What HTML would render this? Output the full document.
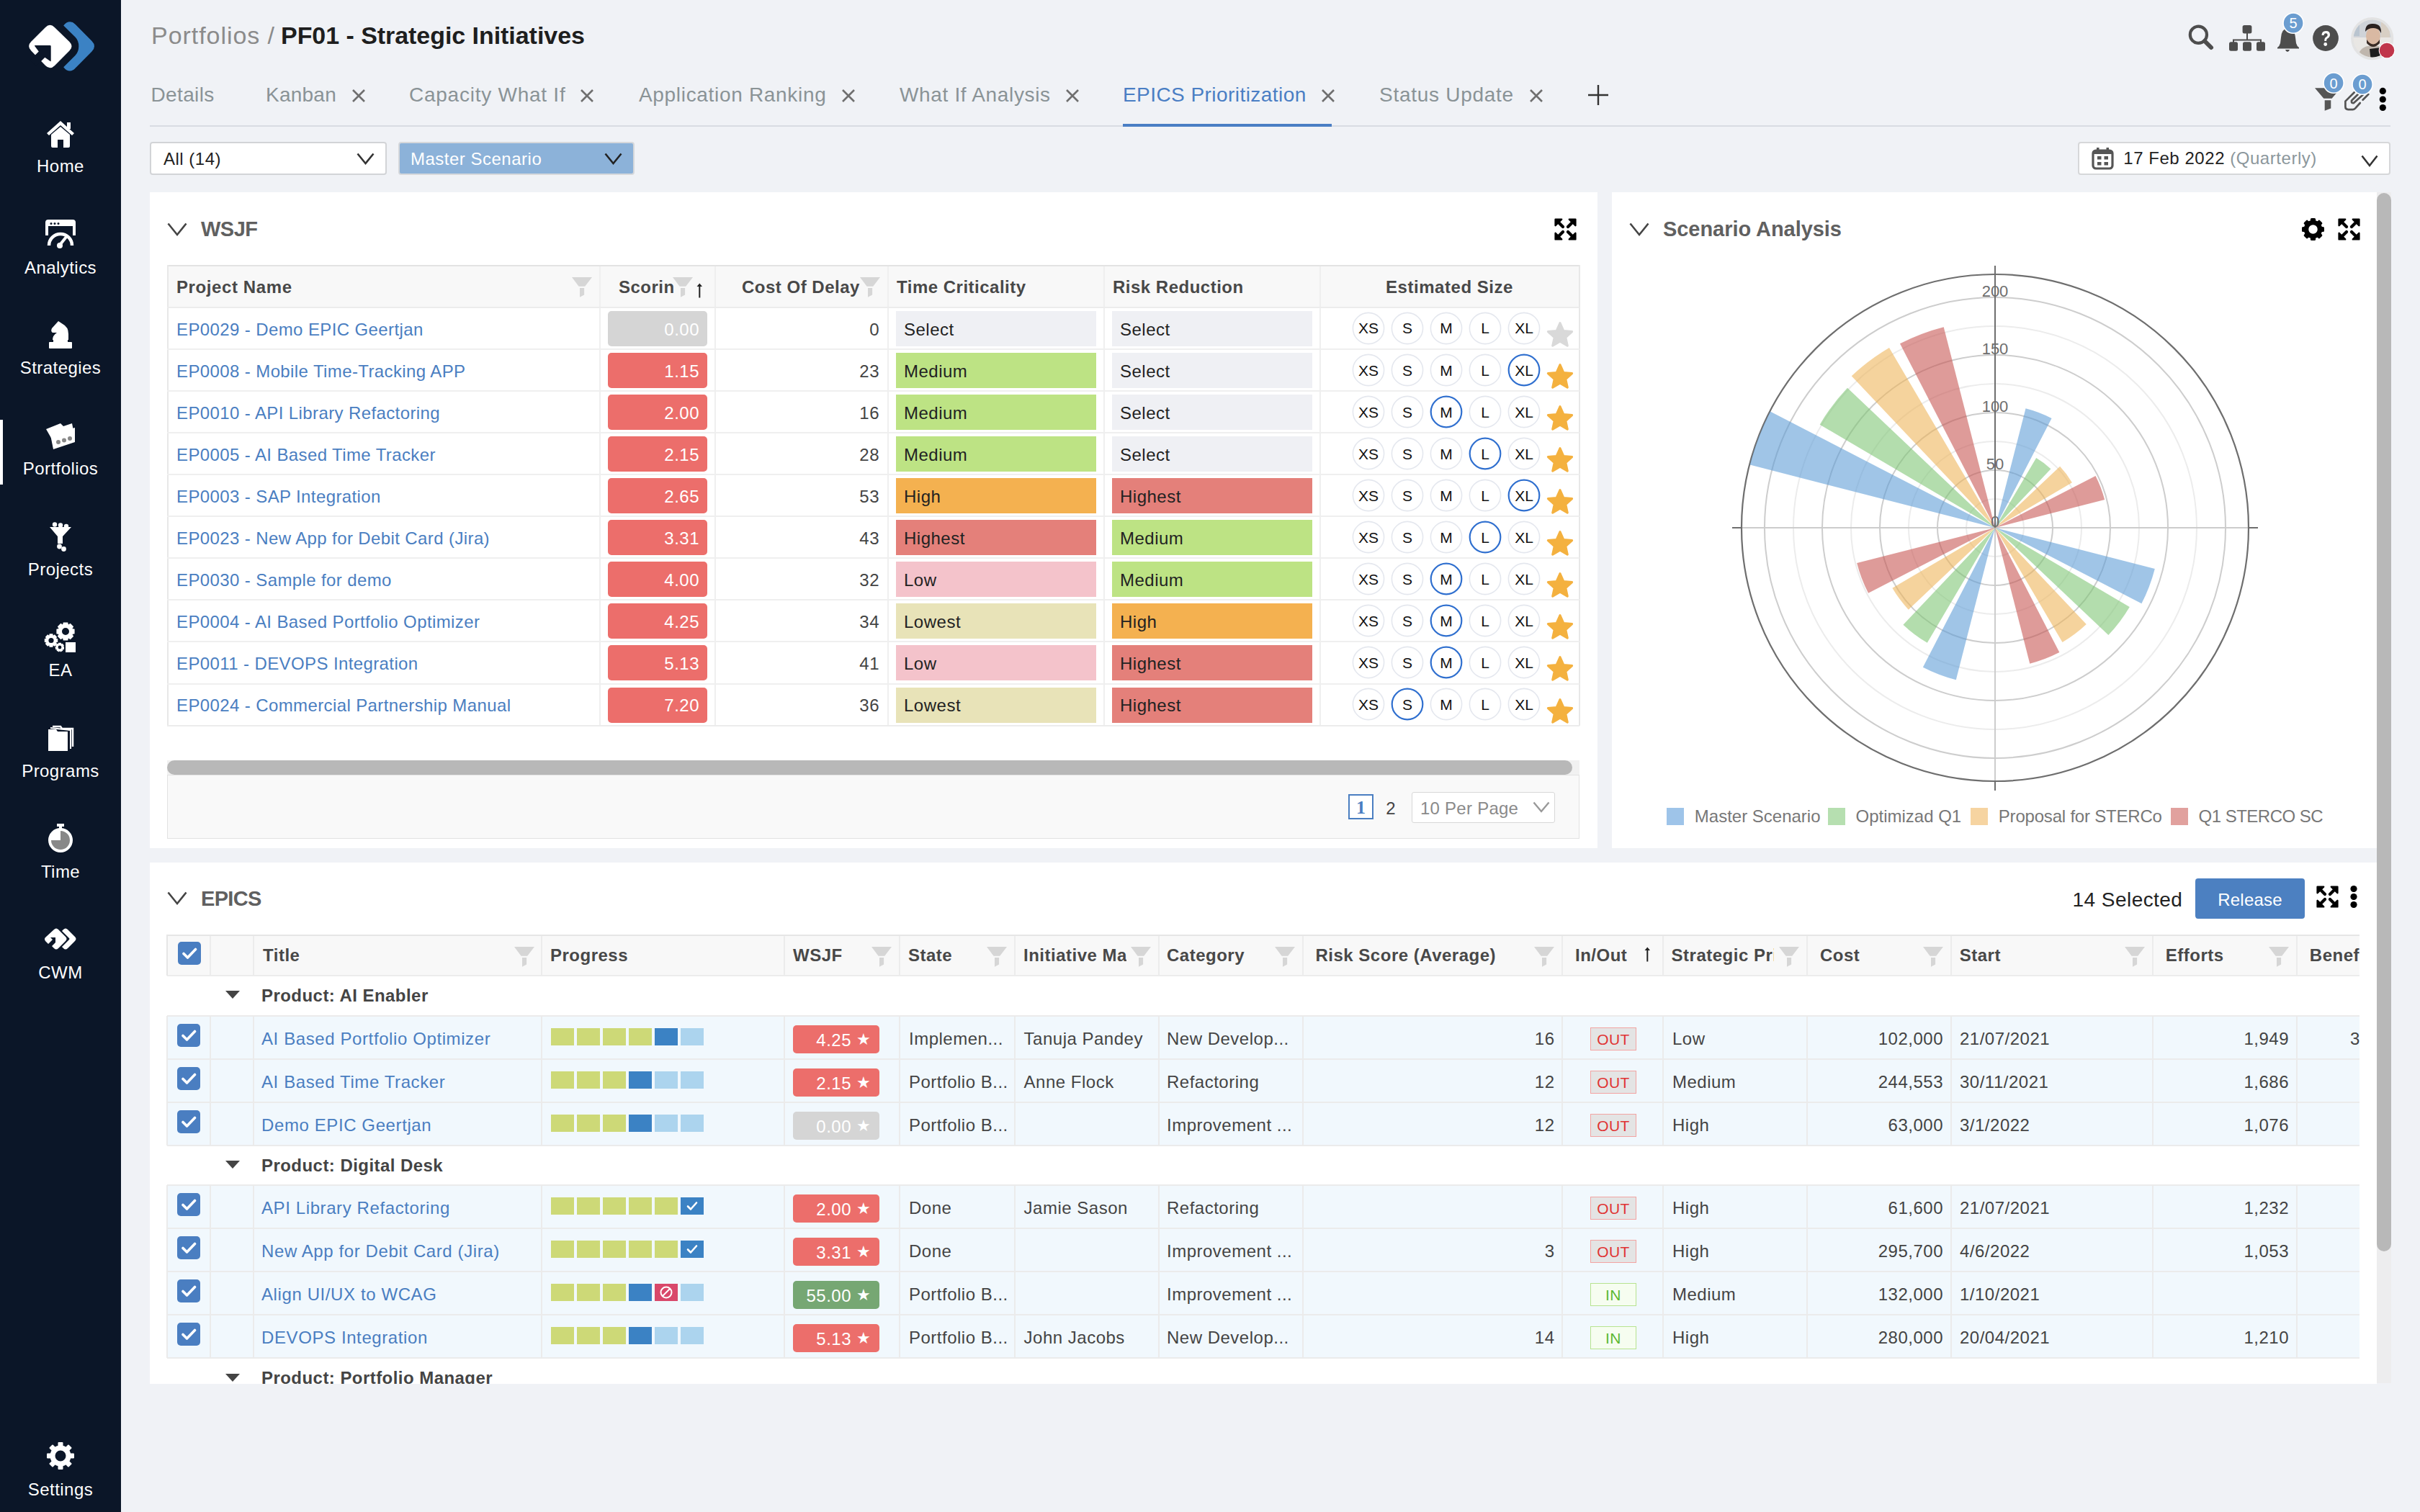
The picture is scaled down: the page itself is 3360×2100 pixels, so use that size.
<!DOCTYPE html><html><head><meta charset="utf-8"><title>EPICS Prioritization</title><style>
html,body{margin:0;padding:0;width:3360px;height:2100px;overflow:hidden;background:#f0f2f6;font-family:"Liberation Sans", sans-serif;}
.a{position:absolute;}
.t{position:absolute;white-space:nowrap;}
svg.a{overflow:visible}
</style></head><body>

<div class="a" style="left:0px;top:0px;width:168px;height:2100px;background:#0b1628"></div>
<svg class="a" style="left:0px;top:0px" width="168" height="120" viewBox="0 0 168 120">
<path d="M 43.25 57.83 L 63.05 37.97 Q 69.4 31.6 75.8 37.9 L 96.4 57.9 Q 102.8 64.2 96.4 70.5 L 75.8 91.2 Q 69.4 97.5 63.0 91.1 L 43.3 70.6 Q 36.9 64.2 43.25 57.83 Z" fill="#fff"/>
<path d="M 48.5 63.1 L 69.5 63.1 Q 70.7 63.1 70.7 64.3 L 70.7 84.5 Q 70.7 85.6 69.8 85 L 62.3 79.8 L 50.1 91.9 L 41.9 83.5 L 53.8 71.6 L 48.2 64 Q 47.9 63.1 48.5 63.1 Z" fill="#0b1628"/>
<path d="M 88.2 35.6 Q 92 30.3 97.2 30.3 Q 101 30.3 104.5 33.7 L 127.5 57 Q 131 60.5 131 64.2 Q 131 68 127.5 71.5 L 104.5 94.7 Q 101 98.5 97.2 98.5 Q 92 98.5 88.2 93.3 L 104.5 77 Q 109.3 72 109.3 64.2 Q 109.3 56.5 104.5 51.5 Z" fill="#3b82c4"/>
</svg>
<svg class="a" style="left:63px;top:165px" width="42" height="40" viewBox="0 0 42 40"><path d="M21 3 L40 20 L37 23 L21 9 L5 23 L2 20 Z" fill="#fff"/><rect x="30" y="5" width="5" height="9" fill="#fff"/><path d="M8 22 L21 11 L34 22 L34 38 Q34 40 32 40 L25 40 L25 29 L17 29 L17 40 L10 40 Q8 40 8 38 Z" fill="#fff"/></svg>
<div class="t" style="top:216.0px;font-size:24px;line-height:29px;color:#fff;font-weight:400;letter-spacing:0.45px;left:-516px;width:1200px;text-align:center;">Home</div>
<svg class="a" style="left:63px;top:305px" width="42" height="40" viewBox="0 0 42 40"><rect x="2" y="2" width="38" height="22" rx="2" fill="none" stroke="#fff" stroke-width="4"/><rect x="2" y="2" width="38" height="7" fill="#fff"/><circle cx="8" cy="5.5" r="1.5" fill="#0b1628"/><circle cx="13" cy="5.5" r="1.5" fill="#0b1628"/><circle cx="18" cy="5.5" r="1.5" fill="#0b1628"/><rect x="0" y="22" width="42" height="18" fill="#0b1628"/><path d="M5 36 A16 16 0 0 1 37 36" fill="none" stroke="#fff" stroke-width="4.5"/><path d="M21 34 L29 24" stroke="#fff" stroke-width="4" stroke-linecap="round"/><circle cx="20" cy="36" r="4" fill="#fff"/></svg>
<div class="t" style="top:356.5px;font-size:24px;line-height:29px;color:#fff;font-weight:400;letter-spacing:0.45px;left:-516px;width:1200px;text-align:center;">Analytics</div>
<svg class="a" style="left:65px;top:444px" width="38" height="41" viewBox="0 0 38 41"><path d="M16 2 L22 6 Q30 10 30 20 L30 28 L8 28 Q8 22 14 18 L8 18 Q5 16 7 12 Z" fill="#fff"/><rect x="3" y="31" width="32" height="9" rx="1" fill="#fff"/><rect x="9" y="28" width="20" height="4" fill="#fff"/></svg>
<div class="t" style="top:495.5px;font-size:24px;line-height:29px;color:#fff;font-weight:400;letter-spacing:0.45px;left:-516px;width:1200px;text-align:center;">Strategies</div>
<div class="a" style="left:0px;top:583px;width:4px;height:90px;background:#fff"></div>
<svg class="a" style="left:62px;top:584px" width="44" height="42" viewBox="0 0 44 42"><path d="M2 12 L22 4 L26 8 L38 4 L40 14 L10 26 Z" fill="#fff"/><path d="M8 20 L42 10 L42 30 L12 40 Z" fill="#fff"/><circle cx="19" cy="30" r="3" fill="#888"/><circle cx="27" cy="27.5" r="3" fill="#888"/><circle cx="35" cy="25" r="3" fill="#888"/></svg>
<div class="t" style="top:636.0px;font-size:24px;line-height:29px;color:#fff;font-weight:400;letter-spacing:0.45px;left:-516px;width:1200px;text-align:center;">Portfolios</div>
<svg class="a" style="left:66px;top:722px" width="36" height="46" viewBox="0 0 36 46"><path d="M3 10 L33 10 L21 23 L21 33 L14 33 L14 23 Z" fill="#fff"/><circle cx="10" cy="6.5" r="3.2" fill="#fff"/><circle cx="18" cy="7.5" r="3.2" fill="#fff"/><circle cx="26" cy="9" r="3.2" fill="#fff"/><circle cx="16.5" cy="37" r="3.4" fill="#fff"/><circle cx="22.5" cy="40.5" r="3.4" fill="#fff"/></svg>
<div class="t" style="top:776.0px;font-size:24px;line-height:29px;color:#fff;font-weight:400;letter-spacing:0.45px;left:-516px;width:1200px;text-align:center;">Projects</div>
<svg class="a" style="left:60px;top:860px" width="48" height="50" viewBox="0 0 48 50"><path fill-rule="evenodd" fill="#fff" d="M26.99 7.84 L27.82 4.40 L34.18 4.40 L35.01 7.84 L34.64 7.69 L37.66 5.84 L42.16 10.34 L40.31 13.36 L40.16 12.99 L43.60 13.82 L43.60 20.18 L40.16 21.01 L40.31 20.64 L42.16 23.66 L37.66 28.16 L34.64 26.31 L35.01 26.16 L34.18 29.60 L27.82 29.60 L26.99 26.16 L27.36 26.31 L24.34 28.16 L19.84 23.66 L21.69 20.64 L21.84 21.01 L18.40 20.18 L18.40 13.82 L21.84 12.99 L21.69 13.36 L19.84 10.34 L24.34 5.84 L27.36 7.69 Z M36.00 17.00 A5 5 0 1 0 26.00 17.00 A5 5 0 1 0 36.00 17.00 ZM8.11 22.90 L8.67 20.29 L13.33 20.29 L13.89 22.90 L13.62 22.80 L15.87 21.34 L19.16 24.63 L17.70 26.88 L17.60 26.61 L20.21 27.17 L20.21 31.83 L17.60 32.39 L17.70 32.12 L19.16 34.37 L15.87 37.66 L13.62 36.20 L13.89 36.10 L13.33 38.71 L8.67 38.71 L8.11 36.10 L8.38 36.20 L6.13 37.66 L2.84 34.37 L4.30 32.12 L4.40 32.39 L1.79 31.83 L1.79 27.17 L4.40 26.61 L4.30 26.88 L2.84 24.63 L6.13 21.34 L8.38 22.80 Z M14.60 29.50 A3.6 3.6 0 1 0 7.40 29.50 A3.6 3.6 0 1 0 14.60 29.50 ZM20.73 34.54 L21.19 32.76 L24.81 32.76 L25.27 34.54 L25.07 34.45 L26.75 33.69 L29.01 36.53 L27.90 38.00 L27.85 37.78 L29.49 38.62 L28.68 42.16 L26.84 42.20 L26.98 42.03 L27.34 43.84 L24.07 45.41 L22.89 44.00 L23.11 44.00 L21.93 45.41 L18.66 43.84 L19.02 42.03 L19.16 42.20 L17.32 42.16 L16.51 38.62 L18.15 37.78 L18.10 38.00 L16.99 36.53 L19.25 33.69 L20.93 34.45 Z M25.40 39.00 A2.4 2.4 0 1 0 20.60 39.00 A2.4 2.4 0 1 0 25.40 39.00 Z"/><rect x="31" y="32" width="14" height="14" fill="#fff"/><rect x="29" y="30" width="2" height="18" fill="#0b1628"/><rect x="29" y="30" width="18" height="2" fill="#0b1628"/></svg>
<div class="t" style="top:916.0px;font-size:24px;line-height:29px;color:#fff;font-weight:400;letter-spacing:0.45px;left:-516px;width:1200px;text-align:center;">EA</div>
<svg class="a" style="left:64px;top:1005px" width="40" height="40" viewBox="0 0 40 40"><path d="M3 8 L14 8 L16 11 L30 11 L30 38 L3 38 Z" fill="#fff"/><path d="M9 4 L20 4 L22 7 L37 7 L37 32" fill="none" stroke="#fff" stroke-width="2.5"/><path d="M6 6 L34 9 L34 35" fill="none" stroke="#fff" stroke-width="2"/></svg>
<div class="t" style="top:1056.0px;font-size:24px;line-height:29px;color:#fff;font-weight:400;letter-spacing:0.45px;left:-516px;width:1200px;text-align:center;">Programs</div>
<svg class="a" style="left:66px;top:1143px" width="36" height="43" viewBox="0 0 36 43"><rect x="13" y="1" width="10" height="4" fill="#fff"/><rect x="16" y="4" width="4" height="5" fill="#fff"/><circle cx="18" cy="24" r="17" fill="#fff"/><path d="M18 24 L18 11 A13 13 0 1 1 5 24 Z" fill="#888"/></svg>
<div class="t" style="top:1195.5px;font-size:24px;line-height:29px;color:#fff;font-weight:400;letter-spacing:0.45px;left:-516px;width:1200px;text-align:center;">Time</div>
<svg class="a" style="left:61px;top:1289px" width="46" height="33" viewBox="0 0 46 33"><path d="M14 2 Q17 -1 20 2 L30 12 Q33 15 30 18 L20 28 Q17 31 14 28 L11 25 L16 20 L16 13 L9 13 L12 16 L6 22 L2 18 Q0 15 2 13 Z" fill="#fff"/><path d="M27 2 Q30 -1 33 2 L43 12 Q46 15 43 18 L33 28 Q30 31 27 28 L25 26 L35 16 Q36 15 35 14 L25 4 Z" fill="#fff"/></svg>
<div class="t" style="top:1335.5px;font-size:24px;line-height:29px;color:#fff;font-weight:400;letter-spacing:0.45px;left:-516px;width:1200px;text-align:center;">CWM</div>
<svg class="a" style="left:64px;top:2002px" width="40" height="40" viewBox="0 0 40 40"><g transform="translate(20,20)"><circle r="11" fill="none" stroke="#fff" stroke-width="7"/><rect x="-3.5" y="-19" width="7" height="8" rx="1" fill="#fff" transform="rotate(0)"/><rect x="-3.5" y="-19" width="7" height="8" rx="1" fill="#fff" transform="rotate(45)"/><rect x="-3.5" y="-19" width="7" height="8" rx="1" fill="#fff" transform="rotate(90)"/><rect x="-3.5" y="-19" width="7" height="8" rx="1" fill="#fff" transform="rotate(135)"/><rect x="-3.5" y="-19" width="7" height="8" rx="1" fill="#fff" transform="rotate(180)"/><rect x="-3.5" y="-19" width="7" height="8" rx="1" fill="#fff" transform="rotate(225)"/><rect x="-3.5" y="-19" width="7" height="8" rx="1" fill="#fff" transform="rotate(270)"/><rect x="-3.5" y="-19" width="7" height="8" rx="1" fill="#fff" transform="rotate(315)"/></g></svg>
<div class="t" style="top:2053.5px;font-size:24px;line-height:29px;color:#fff;font-weight:400;letter-spacing:0.45px;left:-516px;width:1200px;text-align:center;">Settings</div>
<div class="t" style="top:29.1px;font-size:34px;line-height:41px;color:#8b8b8b;font-weight:400;letter-spacing:0.95px;left:210px;">Portfolios /</div>
<div class="t" style="top:29.1px;font-size:34px;line-height:41px;color:#1e1e1e;font-weight:700;letter-spacing:-0.05px;left:390px;">PF01 - Strategic Initiatives</div>
<svg class="a" style="left:3036px;top:32px" width="40" height="42" viewBox="0 0 40 42"><circle cx="16.4" cy="16.3" r="11.6" fill="none" stroke="#4d4d4d" stroke-width="4.2"/><path d="M25 25 L34 34" stroke="#4d4d4d" stroke-width="6" stroke-linecap="round"/></svg>
<svg class="a" style="left:3094px;top:34px" width="52" height="38" viewBox="0 0 52 38"><rect x="19.6" y="1" width="12.8" height="11.4" rx="2.5" fill="#4d4d4d"/><rect x="25" y="12" width="2" height="10" fill="#4d4d4d"/><path d="M7 27 L7 21.6 L45 21.6 L45 27" fill="none" stroke="#4d4d4d" stroke-width="2"/><rect x="1" y="24.3" width="12" height="12.5" rx="2.5" fill="#4d4d4d"/><rect x="20" y="24.3" width="12" height="12.5" rx="2.5" fill="#4d4d4d"/><rect x="39" y="24.3" width="12" height="12.5" rx="2.5" fill="#4d4d4d"/></svg>
<svg class="a" style="left:3160px;top:38px" width="34" height="36" viewBox="0 0 34 36"><path d="M15 2 Q26 2 27 14 L28 22 Q29 26 32 28 L32 29.5 L2 29.5 L2 28 Q5 26 6 22 L7 14 Q8 2 15 2 Z" fill="#4d4d4d"/><path d="M13 31 L19 31 Q18 34 16 34 Q14 34 13 31 Z" fill="#4d4d4d"/></svg>
<svg class="a" style="left:3167.9px;top:15.700000000000003px" width="32.2" height="32.2" viewBox="0 0 32.2 32.2"><circle cx="16.1" cy="16.1" r="14.9" fill="#fff"/><circle cx="16.1" cy="16.1" r="13.299999999999999" fill="#6b9dd0"/></svg><div class="t" style="top:20.3px;font-size:20px;line-height:24px;color:#fff;font-weight:400;letter-spacing:0px;left:2584px;width:1200px;text-align:center;">5</div>
<svg class="a" style="left:3211px;top:35px" width="36" height="36" viewBox="0 0 36 36"><circle cx="18" cy="18" r="17.9" fill="#4d4d4d"/><path d="M12.5 14 Q12.5 8 18.3 8 Q24 8 24 13.3 Q24 16.5 20.5 18.5 Q19 19.4 19 22 L16.3 22 Q16 17.5 19.2 16 Q20.7 15 20.7 13.5 Q20.7 11.2 18.2 11.2 Q15.8 11.2 15.6 14 Z" fill="#fff"/><circle cx="17.7" cy="26.5" r="2.4" fill="#fff"/></svg>
<svg class="a" style="left:3262px;top:22px" width="64" height="64" viewBox="0 0 64 64"><defs><clipPath id="av"><circle cx="31.7" cy="31.6" r="26"/></clipPath></defs>
<circle cx="31.7" cy="31.6" r="29.6" fill="#e3e3e3"/>
<g clip-path="url(#av)"><rect x="0" y="0" width="64" height="64" fill="#e9e7e4"/><rect x="0" y="0" width="64" height="30" fill="#cfd3d8"/><rect x="6" y="6" width="8" height="22" fill="#b9c4cf"/><rect x="44" y="4" width="12" height="26" fill="#d8cfc4"/>
<path d="M10 64 Q12 44 26 42 L40 42 Q54 46 56 64 Z" fill="#bfb6ad"/><path d="M28 46 L44 44 Q50 52 50 64 L30 64 Z" fill="#1d1d1d"/>
<ellipse cx="33" cy="28" rx="10" ry="13" fill="#d9b9a3"/><path d="M22 22 Q22 10 33 11 Q45 11 44 24 Q41 17 33 17 Q26 17 22 22 Z" fill="#2a2220"/><path d="M24 33 Q33 46 42 33 L42 38 Q33 48 24 38 Z" fill="#3a2c26"/></g>
<circle cx="52" cy="48" r="11.3" fill="#fff"/><circle cx="52" cy="48" r="10.3" fill="#c0354a"/></svg>
<div class="a" style="left:208px;top:174px;width:3111px;height:2px;background:#d9dce2"></div>
<div class="t" style="top:114.5px;font-size:28px;line-height:34px;color:#8a9396;font-weight:400;letter-spacing:0.36px;left:209.5px;">Details</div>
<div class="t" style="top:114.5px;font-size:28px;line-height:34px;color:#8a9396;font-weight:400;letter-spacing:0.24px;left:369px;">Kanban</div>
<svg class="a" style="left:487.5px;top:122.5px" width="20" height="20" viewBox="0 0 20 20"><path d="M2 2 L18 18 M18 2 L2 18" stroke="#6f6f6f" stroke-width="2.6"/></svg>
<div class="t" style="top:114.5px;font-size:28px;line-height:34px;color:#8a9396;font-weight:400;letter-spacing:0.75px;left:568px;">Capacity What If</div>
<svg class="a" style="left:805px;top:122.5px" width="20" height="20" viewBox="0 0 20 20"><path d="M2 2 L18 18 M18 2 L2 18" stroke="#6f6f6f" stroke-width="2.6"/></svg>
<div class="t" style="top:114.5px;font-size:28px;line-height:34px;color:#8a9396;font-weight:400;letter-spacing:0.68px;left:887px;">Application Ranking</div>
<svg class="a" style="left:1167.5px;top:122.5px" width="20" height="20" viewBox="0 0 20 20"><path d="M2 2 L18 18 M18 2 L2 18" stroke="#6f6f6f" stroke-width="2.6"/></svg>
<div class="t" style="top:114.5px;font-size:28px;line-height:34px;color:#8a9396;font-weight:400;letter-spacing:0.66px;left:1249px;">What If Analysis</div>
<svg class="a" style="left:1478.5px;top:122.5px" width="20" height="20" viewBox="0 0 20 20"><path d="M2 2 L18 18 M18 2 L2 18" stroke="#6f6f6f" stroke-width="2.6"/></svg>
<div class="t" style="top:114.5px;font-size:28px;line-height:34px;color:#4a7ec4;font-weight:400;letter-spacing:0.44px;left:1559px;">EPICS Prioritization</div>
<svg class="a" style="left:1833.7px;top:122.5px" width="20" height="20" viewBox="0 0 20 20"><path d="M2 2 L18 18 M18 2 L2 18" stroke="#6f6f6f" stroke-width="2.6"/></svg>
<div class="t" style="top:114.5px;font-size:28px;line-height:34px;color:#8a9396;font-weight:400;letter-spacing:0.72px;left:1915px;">Status Update</div>
<svg class="a" style="left:2123px;top:122.5px" width="20" height="20" viewBox="0 0 20 20"><path d="M2 2 L18 18 M18 2 L2 18" stroke="#6f6f6f" stroke-width="2.6"/></svg>
<div class="a" style="left:1559px;top:172px;width:290px;height:4px;background:#4a7ec4"></div>
<svg class="a" style="left:2204px;top:117px" width="30" height="30" viewBox="0 0 30 30"><path d="M15 1 L15 29 M1 15 L29 15" stroke="#333" stroke-width="2.4"/></svg>
<svg class="a" style="left:3213px;top:121px" width="40" height="34" viewBox="0 0 40 34"><path d="M1 1.3 L37 1.3 L24.6 15.8 L13.3 15.8 Z" fill="#555"/><path d="M14.7 18.2 L23.3 18.2 L23.3 29.5 L14.7 32.7 Z" fill="#555"/></svg>
<svg class="a" style="left:3253px;top:122px" width="40" height="34" viewBox="0 0 40 34"><path d="M 15.8 6.2 L 3.4 18.6 L 3.4 26.3 Q 3.4 30.1 7.2 30.1 L 13.6 30.1 Q 15.5 30.1 17 28.6 L 23.8 21 M 27.6 16.7 L 35.4 8.9 M 20.6 9.2 L 12 17.8 L 12 19.6 Q 12 21.2 14.7 21.2 L 27.6 9.7" fill="none" stroke="#555" stroke-width="2.7" stroke-linecap="round" stroke-linejoin="round"/></svg>
<svg class="a" style="left:3223.9px;top:99.0px" width="32.2" height="32.2" viewBox="0 0 32.2 32.2"><circle cx="16.1" cy="16.1" r="14.9" fill="#fff"/><circle cx="16.1" cy="16.1" r="13.299999999999999" fill="#6b9dd0"/></svg><div class="t" style="top:103.6px;font-size:20px;line-height:24px;color:#fff;font-weight:400;letter-spacing:0px;left:2640px;width:1200px;text-align:center;">0</div>
<svg class="a" style="left:3263.9px;top:100.7px" width="32.2" height="32.2" viewBox="0 0 32.2 32.2"><circle cx="16.1" cy="16.1" r="14.9" fill="#fff"/><circle cx="16.1" cy="16.1" r="13.299999999999999" fill="#6b9dd0"/></svg><div class="t" style="top:105.3px;font-size:20px;line-height:24px;color:#fff;font-weight:400;letter-spacing:0px;left:2680px;width:1200px;text-align:center;">0</div>
<svg class="a" style="left:3302px;top:121px" width="12" height="34" viewBox="0 0 12 34"><circle cx="6.3" cy="5.4" r="4.6" fill="#000"/><circle cx="6.3" cy="17" r="4.6" fill="#000"/><circle cx="6.3" cy="28.5" r="4.6" fill="#000"/></svg>
<div class="a" style="left:208px;top:196.5px;width:329px;height:46.5px;background:#fff;border:2px solid #d2d4d7;border-radius:4px;box-sizing:border-box"></div>
<div class="t" style="top:206.0px;font-size:24px;line-height:29px;color:#222;font-weight:400;letter-spacing:0.5px;left:227px;">All (14)</div>
<svg class="a" style="left:495px;top:212px" width="25" height="17" viewBox="0 0 25 17"><path d="M1.5 1.5 L12.5 15 L23.5 1.5" fill="none" stroke="#333" stroke-width="2.6"/></svg>
<div class="a" style="left:553px;top:196.5px;width:328px;height:46.5px;background:#8cb2d9;border:2px solid #d6d8db;border-radius:4px;box-sizing:border-box"></div>
<div class="t" style="top:206.0px;font-size:24px;line-height:29px;color:#fff;font-weight:400;letter-spacing:0.5px;left:570px;">Master Scenario</div>
<svg class="a" style="left:839px;top:212px" width="25" height="17" viewBox="0 0 25 17"><path d="M1.5 1.5 L12.5 15 L23.5 1.5" fill="none" stroke="#222" stroke-width="2.6"/></svg>
<div class="a" style="left:2885px;top:196.5px;width:434px;height:46.5px;background:#fff;border:2px solid #d6d7d9;border-radius:4px;box-sizing:border-box"></div>
<svg class="a" style="left:2904px;top:204px" width="32" height="32" viewBox="0 0 32 32"><rect x="2" y="5" width="27" height="25" rx="4" fill="none" stroke="#555" stroke-width="3.2"/><rect x="7" y="1" width="3.5" height="6" fill="#555"/><rect x="20.5" y="1" width="3.5" height="6" fill="#555"/><rect x="2" y="5" width="27" height="5" fill="#555"/><rect x="8" y="13" width="5.5" height="4.5" fill="#555"/><rect x="17.5" y="13" width="5.5" height="4.5" fill="#555"/><rect x="8" y="21" width="5.5" height="4.5" fill="#555"/><rect x="17.5" y="21" width="5.5" height="4.5" fill="#555"/></svg>
<div class="t" style="top:204.7px;font-size:24px;line-height:29px;color:#222;font-weight:400;letter-spacing:0.54px;left:2948.3px;">17 Feb 2022 <span style="color:#8c979c">(Quarterly)</span></div>
<svg class="a" style="left:3278px;top:215px" width="24" height="17" viewBox="0 0 24 17"><path d="M1.5 1.5 L12.0 15 L22.5 1.5" fill="none" stroke="#333" stroke-width="2.6"/></svg>
<div class="a" style="left:208px;top:267px;width:2010px;height:911px;background:#fff"></div>
<svg class="a" style="left:231.5px;top:308.5px" width="28" height="19" viewBox="0 0 28 19"><path d="M1.5 1.5 L14.0 17 L26.5 1.5" fill="none" stroke="#444" stroke-width="2.6"/></svg>
<div class="t" style="top:300.5px;font-size:29px;line-height:35px;color:#606060;font-weight:700;letter-spacing:-0.5px;left:279px;">WSJF</div>
<svg class="a" style="left:2158px;top:303px" width="31" height="31" viewBox="0 0 31 31"><g fill="#000" stroke="#000" stroke-linejoin="round" stroke-linecap="round"><g transform=""><path d="M1.6 1.6 L10.2 1.6 L1.6 10.2 Z" stroke-width="2.4"/><path d="M5 5 L12 12" stroke-width="4.3" fill="none"/></g><g transform="translate(31,0) scale(-1,1)"><path d="M1.6 1.6 L10.2 1.6 L1.6 10.2 Z" stroke-width="2.4"/><path d="M5 5 L12 12" stroke-width="4.3" fill="none"/></g><g transform="translate(0,31) scale(1,-1)"><path d="M1.6 1.6 L10.2 1.6 L1.6 10.2 Z" stroke-width="2.4"/><path d="M5 5 L12 12" stroke-width="4.3" fill="none"/></g><g transform="translate(31,31) scale(-1,-1)"><path d="M1.6 1.6 L10.2 1.6 L1.6 10.2 Z" stroke-width="2.4"/><path d="M5 5 L12 12" stroke-width="4.3" fill="none"/></g></g></svg>
<div class="a" style="left:232px;top:368px;width:1961px;height:59px;background:#f8f8f8;border-top:2px solid #e3e3e3;box-sizing:border-box"></div>
<div class="a" style="left:832px;top:370px;width:2px;height:637.6px;background:#efefef"></div>
<div class="a" style="left:992px;top:370px;width:2px;height:637.6px;background:#efefef"></div>
<div class="a" style="left:1232px;top:370px;width:2px;height:637.6px;background:#efefef"></div>
<div class="a" style="left:1532px;top:370px;width:2px;height:637.6px;background:#efefef"></div>
<div class="a" style="left:1832px;top:370px;width:2px;height:637.6px;background:#efefef"></div>
<div class="a" style="left:232px;top:368px;width:2px;height:639.6px;background:#e8e8e8"></div>
<div class="a" style="left:2192px;top:368px;width:2px;height:639.6px;background:#e8e8e8"></div>
<div class="a" style="left:232px;top:426px;width:1961px;height:2px;background:#ececec"></div>
<div class="t" style="top:384.0px;font-size:24px;line-height:29px;color:#484848;font-weight:700;letter-spacing:0.6px;left:245px;">Project Name</div>
<svg class="a" style="left:794px;top:385px" width="28" height="29" viewBox="0 0 28 29"><path d="M0 0 L28 0 L18.2 12.7 L9.6 12.7 Z" fill="#d6d6d6"/><path d="M11 15 L17.1 15 L17.1 24.4 L11 27.7 Z" fill="#d6d6d6"/></svg>
<div class="t" style="top:384.0px;font-size:24px;line-height:29px;color:#484848;font-weight:700;letter-spacing:0.5px;left:859px;">Scorin</div>
<svg class="a" style="left:934px;top:385px" width="28" height="29" viewBox="0 0 28 29"><path d="M0 0 L28 0 L18.2 12.7 L9.6 12.7 Z" fill="#d6d6d6"/><path d="M11 15 L17.1 15 L17.1 24.4 L11 27.7 Z" fill="#d6d6d6"/></svg>
<svg class="a" style="left:964px;top:392px" width="14" height="22" viewBox="0 0 14 22"><path d="M7.3 5 L7.3 21.5" stroke="#222" stroke-width="2"/><path d="M3.5 6 L11 6 L7.3 1.5 Z" fill="#222"/></svg>
<div class="t" style="top:384.0px;font-size:24px;line-height:29px;color:#484848;font-weight:700;letter-spacing:0.5px;left:1030px;">Cost Of Delay</div>
<svg class="a" style="left:1194px;top:385px" width="28" height="29" viewBox="0 0 28 29"><path d="M0 0 L28 0 L18.2 12.7 L9.6 12.7 Z" fill="#d6d6d6"/><path d="M11 15 L17.1 15 L17.1 24.4 L11 27.7 Z" fill="#d6d6d6"/></svg>
<div class="t" style="top:384.0px;font-size:24px;line-height:29px;color:#484848;font-weight:700;letter-spacing:0.5px;left:1245px;">Time Criticality</div>
<div class="t" style="top:384.0px;font-size:24px;line-height:29px;color:#484848;font-weight:700;letter-spacing:0.5px;left:1545px;">Risk Reduction</div>
<div class="t" style="top:384.0px;font-size:24px;line-height:29px;color:#484848;font-weight:700;letter-spacing:0.54px;left:1412.5px;width:1200px;text-align:center;">Estimated Size</div>
<div class="t" style="top:442.8px;font-size:24px;line-height:29px;color:#4a7ec1;font-weight:400;letter-spacing:0.39px;left:245px;">EP0029 - Demo EPIC Geertjan</div>
<div class="a" style="left:844px;top:432px;width:138px;height:49px;background:#d5d5d5;border-radius:5px"></div>
<div class="t" style="top:442.8px;font-size:24px;line-height:29px;color:#fff;font-weight:400;letter-spacing:0.5px;left:-229px;width:1200px;text-align:right;">0.00</div>
<div class="t" style="top:442.8px;font-size:24px;line-height:29px;color:#444;font-weight:400;letter-spacing:0.5px;left:21px;width:1200px;text-align:right;">0</div>
<div class="a" style="left:1244px;top:432px;width:278px;height:49px;background:#eff0f4"></div>
<div class="t" style="top:442.8px;font-size:24px;line-height:29px;color:#222;font-weight:400;letter-spacing:0.5px;left:1255px;">Select</div>
<div class="a" style="left:1544px;top:432px;width:278px;height:49px;background:#eff0f4"></div>
<div class="t" style="top:442.8px;font-size:24px;line-height:29px;color:#222;font-weight:400;letter-spacing:0.5px;left:1555px;">Select</div>
<svg class="a" style="left:1877px;top:433px" width="46" height="46" viewBox="0 0 46 46"><circle cx="23" cy="23" r="21.6" fill="#fff" stroke="#e4e7ee" stroke-width="1.6"/></svg>
<div class="t" style="top:443.4px;font-size:21px;line-height:25px;color:#111;font-weight:400;letter-spacing:0px;left:1300px;width:1200px;text-align:center;">XS</div>
<svg class="a" style="left:1931px;top:433px" width="46" height="46" viewBox="0 0 46 46"><circle cx="23" cy="23" r="21.6" fill="#fff" stroke="#e4e7ee" stroke-width="1.6"/></svg>
<div class="t" style="top:443.4px;font-size:21px;line-height:25px;color:#111;font-weight:400;letter-spacing:0px;left:1354px;width:1200px;text-align:center;">S</div>
<svg class="a" style="left:1985px;top:433px" width="46" height="46" viewBox="0 0 46 46"><circle cx="23" cy="23" r="21.6" fill="#fff" stroke="#e4e7ee" stroke-width="1.6"/></svg>
<div class="t" style="top:443.4px;font-size:21px;line-height:25px;color:#111;font-weight:400;letter-spacing:0px;left:1408px;width:1200px;text-align:center;">M</div>
<svg class="a" style="left:2039px;top:433px" width="46" height="46" viewBox="0 0 46 46"><circle cx="23" cy="23" r="21.6" fill="#fff" stroke="#e4e7ee" stroke-width="1.6"/></svg>
<div class="t" style="top:443.4px;font-size:21px;line-height:25px;color:#111;font-weight:400;letter-spacing:0px;left:1462px;width:1200px;text-align:center;">L</div>
<svg class="a" style="left:2093px;top:433px" width="46" height="46" viewBox="0 0 46 46"><circle cx="23" cy="23" r="21.6" fill="#fff" stroke="#e4e7ee" stroke-width="1.6"/></svg>
<div class="t" style="top:443.4px;font-size:21px;line-height:25px;color:#111;font-weight:400;letter-spacing:0px;left:1516px;width:1200px;text-align:center;">XL</div>
<svg class="a" style="left:2148px;top:447px" width="36" height="36" viewBox="0 0 36 36"><polygon points="18.00,1.50 22.82,12.37 34.64,13.59 25.80,21.53 28.29,33.16 18.00,27.20 7.71,33.16 10.20,21.53 1.36,13.59 13.18,12.37" fill="#d9d9d9" stroke="#d9d9d9" stroke-width="3" stroke-linejoin="round"/></svg>
<div class="a" style="left:232px;top:484px;width:1961px;height:2px;background:#efefef"></div>
<div class="t" style="top:500.9px;font-size:24px;line-height:29px;color:#4a7ec1;font-weight:400;letter-spacing:0.39px;left:245px;">EP0008 - Mobile Time-Tracking APP</div>
<div class="a" style="left:844px;top:490px;width:138px;height:49px;background:#ec6e6b;border-radius:5px"></div>
<div class="t" style="top:500.9px;font-size:24px;line-height:29px;color:#fff;font-weight:400;letter-spacing:0.5px;left:-229px;width:1200px;text-align:right;">1.15</div>
<div class="t" style="top:500.9px;font-size:24px;line-height:29px;color:#444;font-weight:400;letter-spacing:0.5px;left:21px;width:1200px;text-align:right;">23</div>
<div class="a" style="left:1244px;top:490px;width:278px;height:49px;background:#bde384"></div>
<div class="t" style="top:500.9px;font-size:24px;line-height:29px;color:#222;font-weight:400;letter-spacing:0.5px;left:1255px;">Medium</div>
<div class="a" style="left:1544px;top:490px;width:278px;height:49px;background:#eff0f4"></div>
<div class="t" style="top:500.9px;font-size:24px;line-height:29px;color:#222;font-weight:400;letter-spacing:0.5px;left:1555px;">Select</div>
<svg class="a" style="left:1877px;top:491px" width="46" height="46" viewBox="0 0 46 46"><circle cx="23" cy="23" r="21.6" fill="#fff" stroke="#e4e7ee" stroke-width="1.6"/></svg>
<div class="t" style="top:501.5px;font-size:21px;line-height:25px;color:#111;font-weight:400;letter-spacing:0px;left:1300px;width:1200px;text-align:center;">XS</div>
<svg class="a" style="left:1931px;top:491px" width="46" height="46" viewBox="0 0 46 46"><circle cx="23" cy="23" r="21.6" fill="#fff" stroke="#e4e7ee" stroke-width="1.6"/></svg>
<div class="t" style="top:501.5px;font-size:21px;line-height:25px;color:#111;font-weight:400;letter-spacing:0px;left:1354px;width:1200px;text-align:center;">S</div>
<svg class="a" style="left:1985px;top:491px" width="46" height="46" viewBox="0 0 46 46"><circle cx="23" cy="23" r="21.6" fill="#fff" stroke="#e4e7ee" stroke-width="1.6"/></svg>
<div class="t" style="top:501.5px;font-size:21px;line-height:25px;color:#111;font-weight:400;letter-spacing:0px;left:1408px;width:1200px;text-align:center;">M</div>
<svg class="a" style="left:2039px;top:491px" width="46" height="46" viewBox="0 0 46 46"><circle cx="23" cy="23" r="21.6" fill="#fff" stroke="#e4e7ee" stroke-width="1.6"/></svg>
<div class="t" style="top:501.5px;font-size:21px;line-height:25px;color:#111;font-weight:400;letter-spacing:0px;left:1462px;width:1200px;text-align:center;">L</div>
<svg class="a" style="left:2093px;top:491px" width="46" height="46" viewBox="0 0 46 46"><circle cx="23" cy="23" r="21.3" fill="#fff" stroke="#2f6fcf" stroke-width="2.2"/></svg>
<div class="t" style="top:501.5px;font-size:21px;line-height:25px;color:#111;font-weight:400;letter-spacing:0px;left:1516px;width:1200px;text-align:center;">XL</div>
<svg class="a" style="left:2148px;top:505px" width="36" height="36" viewBox="0 0 36 36"><polygon points="18.00,1.50 22.82,12.37 34.64,13.59 25.80,21.53 28.29,33.16 18.00,27.20 7.71,33.16 10.20,21.53 1.36,13.59 13.18,12.37" fill="#f4b13f" stroke="#f4b13f" stroke-width="3" stroke-linejoin="round"/></svg>
<div class="a" style="left:232px;top:542px;width:1961px;height:2px;background:#efefef"></div>
<div class="t" style="top:558.9px;font-size:24px;line-height:29px;color:#4a7ec1;font-weight:400;letter-spacing:0.39px;left:245px;">EP0010 - API Library Refactoring</div>
<div class="a" style="left:844px;top:548px;width:138px;height:49px;background:#ec6e6b;border-radius:5px"></div>
<div class="t" style="top:558.9px;font-size:24px;line-height:29px;color:#fff;font-weight:400;letter-spacing:0.5px;left:-229px;width:1200px;text-align:right;">2.00</div>
<div class="t" style="top:558.9px;font-size:24px;line-height:29px;color:#444;font-weight:400;letter-spacing:0.5px;left:21px;width:1200px;text-align:right;">16</div>
<div class="a" style="left:1244px;top:548px;width:278px;height:49px;background:#bde384"></div>
<div class="t" style="top:558.9px;font-size:24px;line-height:29px;color:#222;font-weight:400;letter-spacing:0.5px;left:1255px;">Medium</div>
<div class="a" style="left:1544px;top:548px;width:278px;height:49px;background:#eff0f4"></div>
<div class="t" style="top:558.9px;font-size:24px;line-height:29px;color:#222;font-weight:400;letter-spacing:0.5px;left:1555px;">Select</div>
<svg class="a" style="left:1877px;top:549px" width="46" height="46" viewBox="0 0 46 46"><circle cx="23" cy="23" r="21.6" fill="#fff" stroke="#e4e7ee" stroke-width="1.6"/></svg>
<div class="t" style="top:559.5px;font-size:21px;line-height:25px;color:#111;font-weight:400;letter-spacing:0px;left:1300px;width:1200px;text-align:center;">XS</div>
<svg class="a" style="left:1931px;top:549px" width="46" height="46" viewBox="0 0 46 46"><circle cx="23" cy="23" r="21.6" fill="#fff" stroke="#e4e7ee" stroke-width="1.6"/></svg>
<div class="t" style="top:559.5px;font-size:21px;line-height:25px;color:#111;font-weight:400;letter-spacing:0px;left:1354px;width:1200px;text-align:center;">S</div>
<svg class="a" style="left:1985px;top:549px" width="46" height="46" viewBox="0 0 46 46"><circle cx="23" cy="23" r="21.3" fill="#fff" stroke="#2f6fcf" stroke-width="2.2"/></svg>
<div class="t" style="top:559.5px;font-size:21px;line-height:25px;color:#111;font-weight:400;letter-spacing:0px;left:1408px;width:1200px;text-align:center;">M</div>
<svg class="a" style="left:2039px;top:549px" width="46" height="46" viewBox="0 0 46 46"><circle cx="23" cy="23" r="21.6" fill="#fff" stroke="#e4e7ee" stroke-width="1.6"/></svg>
<div class="t" style="top:559.5px;font-size:21px;line-height:25px;color:#111;font-weight:400;letter-spacing:0px;left:1462px;width:1200px;text-align:center;">L</div>
<svg class="a" style="left:2093px;top:549px" width="46" height="46" viewBox="0 0 46 46"><circle cx="23" cy="23" r="21.6" fill="#fff" stroke="#e4e7ee" stroke-width="1.6"/></svg>
<div class="t" style="top:559.5px;font-size:21px;line-height:25px;color:#111;font-weight:400;letter-spacing:0px;left:1516px;width:1200px;text-align:center;">XL</div>
<svg class="a" style="left:2148px;top:563px" width="36" height="36" viewBox="0 0 36 36"><polygon points="18.00,1.50 22.82,12.37 34.64,13.59 25.80,21.53 28.29,33.16 18.00,27.20 7.71,33.16 10.20,21.53 1.36,13.59 13.18,12.37" fill="#f4b13f" stroke="#f4b13f" stroke-width="3" stroke-linejoin="round"/></svg>
<div class="a" style="left:232px;top:600px;width:1961px;height:2px;background:#efefef"></div>
<div class="t" style="top:617.0px;font-size:24px;line-height:29px;color:#4a7ec1;font-weight:400;letter-spacing:0.39px;left:245px;">EP0005 - AI Based Time Tracker</div>
<div class="a" style="left:844px;top:606px;width:138px;height:49px;background:#ec6e6b;border-radius:5px"></div>
<div class="t" style="top:617.0px;font-size:24px;line-height:29px;color:#fff;font-weight:400;letter-spacing:0.5px;left:-229px;width:1200px;text-align:right;">2.15</div>
<div class="t" style="top:617.0px;font-size:24px;line-height:29px;color:#444;font-weight:400;letter-spacing:0.5px;left:21px;width:1200px;text-align:right;">28</div>
<div class="a" style="left:1244px;top:606px;width:278px;height:49px;background:#bde384"></div>
<div class="t" style="top:617.0px;font-size:24px;line-height:29px;color:#222;font-weight:400;letter-spacing:0.5px;left:1255px;">Medium</div>
<div class="a" style="left:1544px;top:606px;width:278px;height:49px;background:#eff0f4"></div>
<div class="t" style="top:617.0px;font-size:24px;line-height:29px;color:#222;font-weight:400;letter-spacing:0.5px;left:1555px;">Select</div>
<svg class="a" style="left:1877px;top:607px" width="46" height="46" viewBox="0 0 46 46"><circle cx="23" cy="23" r="21.6" fill="#fff" stroke="#e4e7ee" stroke-width="1.6"/></svg>
<div class="t" style="top:617.6px;font-size:21px;line-height:25px;color:#111;font-weight:400;letter-spacing:0px;left:1300px;width:1200px;text-align:center;">XS</div>
<svg class="a" style="left:1931px;top:607px" width="46" height="46" viewBox="0 0 46 46"><circle cx="23" cy="23" r="21.6" fill="#fff" stroke="#e4e7ee" stroke-width="1.6"/></svg>
<div class="t" style="top:617.6px;font-size:21px;line-height:25px;color:#111;font-weight:400;letter-spacing:0px;left:1354px;width:1200px;text-align:center;">S</div>
<svg class="a" style="left:1985px;top:607px" width="46" height="46" viewBox="0 0 46 46"><circle cx="23" cy="23" r="21.6" fill="#fff" stroke="#e4e7ee" stroke-width="1.6"/></svg>
<div class="t" style="top:617.6px;font-size:21px;line-height:25px;color:#111;font-weight:400;letter-spacing:0px;left:1408px;width:1200px;text-align:center;">M</div>
<svg class="a" style="left:2039px;top:607px" width="46" height="46" viewBox="0 0 46 46"><circle cx="23" cy="23" r="21.3" fill="#fff" stroke="#2f6fcf" stroke-width="2.2"/></svg>
<div class="t" style="top:617.6px;font-size:21px;line-height:25px;color:#111;font-weight:400;letter-spacing:0px;left:1462px;width:1200px;text-align:center;">L</div>
<svg class="a" style="left:2093px;top:607px" width="46" height="46" viewBox="0 0 46 46"><circle cx="23" cy="23" r="21.6" fill="#fff" stroke="#e4e7ee" stroke-width="1.6"/></svg>
<div class="t" style="top:617.6px;font-size:21px;line-height:25px;color:#111;font-weight:400;letter-spacing:0px;left:1516px;width:1200px;text-align:center;">XL</div>
<svg class="a" style="left:2148px;top:621px" width="36" height="36" viewBox="0 0 36 36"><polygon points="18.00,1.50 22.82,12.37 34.64,13.59 25.80,21.53 28.29,33.16 18.00,27.20 7.71,33.16 10.20,21.53 1.36,13.59 13.18,12.37" fill="#f4b13f" stroke="#f4b13f" stroke-width="3" stroke-linejoin="round"/></svg>
<div class="a" style="left:232px;top:658px;width:1961px;height:2px;background:#efefef"></div>
<div class="t" style="top:675.0px;font-size:24px;line-height:29px;color:#4a7ec1;font-weight:400;letter-spacing:0.39px;left:245px;">EP0003 - SAP Integration</div>
<div class="a" style="left:844px;top:664px;width:138px;height:49px;background:#ec6e6b;border-radius:5px"></div>
<div class="t" style="top:675.0px;font-size:24px;line-height:29px;color:#fff;font-weight:400;letter-spacing:0.5px;left:-229px;width:1200px;text-align:right;">2.65</div>
<div class="t" style="top:675.0px;font-size:24px;line-height:29px;color:#444;font-weight:400;letter-spacing:0.5px;left:21px;width:1200px;text-align:right;">53</div>
<div class="a" style="left:1244px;top:664px;width:278px;height:49px;background:#f4b150"></div>
<div class="t" style="top:675.0px;font-size:24px;line-height:29px;color:#222;font-weight:400;letter-spacing:0.5px;left:1255px;">High</div>
<div class="a" style="left:1544px;top:664px;width:278px;height:49px;background:#e4807a"></div>
<div class="t" style="top:675.0px;font-size:24px;line-height:29px;color:#222;font-weight:400;letter-spacing:0.5px;left:1555px;">Highest</div>
<svg class="a" style="left:1877px;top:665px" width="46" height="46" viewBox="0 0 46 46"><circle cx="23" cy="23" r="21.6" fill="#fff" stroke="#e4e7ee" stroke-width="1.6"/></svg>
<div class="t" style="top:675.6px;font-size:21px;line-height:25px;color:#111;font-weight:400;letter-spacing:0px;left:1300px;width:1200px;text-align:center;">XS</div>
<svg class="a" style="left:1931px;top:665px" width="46" height="46" viewBox="0 0 46 46"><circle cx="23" cy="23" r="21.6" fill="#fff" stroke="#e4e7ee" stroke-width="1.6"/></svg>
<div class="t" style="top:675.6px;font-size:21px;line-height:25px;color:#111;font-weight:400;letter-spacing:0px;left:1354px;width:1200px;text-align:center;">S</div>
<svg class="a" style="left:1985px;top:665px" width="46" height="46" viewBox="0 0 46 46"><circle cx="23" cy="23" r="21.6" fill="#fff" stroke="#e4e7ee" stroke-width="1.6"/></svg>
<div class="t" style="top:675.6px;font-size:21px;line-height:25px;color:#111;font-weight:400;letter-spacing:0px;left:1408px;width:1200px;text-align:center;">M</div>
<svg class="a" style="left:2039px;top:665px" width="46" height="46" viewBox="0 0 46 46"><circle cx="23" cy="23" r="21.6" fill="#fff" stroke="#e4e7ee" stroke-width="1.6"/></svg>
<div class="t" style="top:675.6px;font-size:21px;line-height:25px;color:#111;font-weight:400;letter-spacing:0px;left:1462px;width:1200px;text-align:center;">L</div>
<svg class="a" style="left:2093px;top:665px" width="46" height="46" viewBox="0 0 46 46"><circle cx="23" cy="23" r="21.3" fill="#fff" stroke="#2f6fcf" stroke-width="2.2"/></svg>
<div class="t" style="top:675.6px;font-size:21px;line-height:25px;color:#111;font-weight:400;letter-spacing:0px;left:1516px;width:1200px;text-align:center;">XL</div>
<svg class="a" style="left:2148px;top:679px" width="36" height="36" viewBox="0 0 36 36"><polygon points="18.00,1.50 22.82,12.37 34.64,13.59 25.80,21.53 28.29,33.16 18.00,27.20 7.71,33.16 10.20,21.53 1.36,13.59 13.18,12.37" fill="#f4b13f" stroke="#f4b13f" stroke-width="3" stroke-linejoin="round"/></svg>
<div class="a" style="left:232px;top:716px;width:1961px;height:2px;background:#efefef"></div>
<div class="t" style="top:733.1px;font-size:24px;line-height:29px;color:#4a7ec1;font-weight:400;letter-spacing:0.39px;left:245px;">EP0023 - New App for Debit Card (Jira)</div>
<div class="a" style="left:844px;top:722px;width:138px;height:49px;background:#ec6e6b;border-radius:5px"></div>
<div class="t" style="top:733.1px;font-size:24px;line-height:29px;color:#fff;font-weight:400;letter-spacing:0.5px;left:-229px;width:1200px;text-align:right;">3.31</div>
<div class="t" style="top:733.1px;font-size:24px;line-height:29px;color:#444;font-weight:400;letter-spacing:0.5px;left:21px;width:1200px;text-align:right;">43</div>
<div class="a" style="left:1244px;top:722px;width:278px;height:49px;background:#e4807a"></div>
<div class="t" style="top:733.1px;font-size:24px;line-height:29px;color:#222;font-weight:400;letter-spacing:0.5px;left:1255px;">Highest</div>
<div class="a" style="left:1544px;top:722px;width:278px;height:49px;background:#bde384"></div>
<div class="t" style="top:733.1px;font-size:24px;line-height:29px;color:#222;font-weight:400;letter-spacing:0.5px;left:1555px;">Medium</div>
<svg class="a" style="left:1877px;top:723px" width="46" height="46" viewBox="0 0 46 46"><circle cx="23" cy="23" r="21.6" fill="#fff" stroke="#e4e7ee" stroke-width="1.6"/></svg>
<div class="t" style="top:733.7px;font-size:21px;line-height:25px;color:#111;font-weight:400;letter-spacing:0px;left:1300px;width:1200px;text-align:center;">XS</div>
<svg class="a" style="left:1931px;top:723px" width="46" height="46" viewBox="0 0 46 46"><circle cx="23" cy="23" r="21.6" fill="#fff" stroke="#e4e7ee" stroke-width="1.6"/></svg>
<div class="t" style="top:733.7px;font-size:21px;line-height:25px;color:#111;font-weight:400;letter-spacing:0px;left:1354px;width:1200px;text-align:center;">S</div>
<svg class="a" style="left:1985px;top:723px" width="46" height="46" viewBox="0 0 46 46"><circle cx="23" cy="23" r="21.6" fill="#fff" stroke="#e4e7ee" stroke-width="1.6"/></svg>
<div class="t" style="top:733.7px;font-size:21px;line-height:25px;color:#111;font-weight:400;letter-spacing:0px;left:1408px;width:1200px;text-align:center;">M</div>
<svg class="a" style="left:2039px;top:723px" width="46" height="46" viewBox="0 0 46 46"><circle cx="23" cy="23" r="21.3" fill="#fff" stroke="#2f6fcf" stroke-width="2.2"/></svg>
<div class="t" style="top:733.7px;font-size:21px;line-height:25px;color:#111;font-weight:400;letter-spacing:0px;left:1462px;width:1200px;text-align:center;">L</div>
<svg class="a" style="left:2093px;top:723px" width="46" height="46" viewBox="0 0 46 46"><circle cx="23" cy="23" r="21.6" fill="#fff" stroke="#e4e7ee" stroke-width="1.6"/></svg>
<div class="t" style="top:733.7px;font-size:21px;line-height:25px;color:#111;font-weight:400;letter-spacing:0px;left:1516px;width:1200px;text-align:center;">XL</div>
<svg class="a" style="left:2148px;top:737px" width="36" height="36" viewBox="0 0 36 36"><polygon points="18.00,1.50 22.82,12.37 34.64,13.59 25.80,21.53 28.29,33.16 18.00,27.20 7.71,33.16 10.20,21.53 1.36,13.59 13.18,12.37" fill="#f4b13f" stroke="#f4b13f" stroke-width="3" stroke-linejoin="round"/></svg>
<div class="a" style="left:232px;top:774px;width:1961px;height:2px;background:#efefef"></div>
<div class="t" style="top:791.2px;font-size:24px;line-height:29px;color:#4a7ec1;font-weight:400;letter-spacing:0.39px;left:245px;">EP0030 - Sample for demo</div>
<div class="a" style="left:844px;top:780px;width:138px;height:49px;background:#ec6e6b;border-radius:5px"></div>
<div class="t" style="top:791.2px;font-size:24px;line-height:29px;color:#fff;font-weight:400;letter-spacing:0.5px;left:-229px;width:1200px;text-align:right;">4.00</div>
<div class="t" style="top:791.2px;font-size:24px;line-height:29px;color:#444;font-weight:400;letter-spacing:0.5px;left:21px;width:1200px;text-align:right;">32</div>
<div class="a" style="left:1244px;top:780px;width:278px;height:49px;background:#f4c3cb"></div>
<div class="t" style="top:791.2px;font-size:24px;line-height:29px;color:#222;font-weight:400;letter-spacing:0.5px;left:1255px;">Low</div>
<div class="a" style="left:1544px;top:780px;width:278px;height:49px;background:#bde384"></div>
<div class="t" style="top:791.2px;font-size:24px;line-height:29px;color:#222;font-weight:400;letter-spacing:0.5px;left:1555px;">Medium</div>
<svg class="a" style="left:1877px;top:781px" width="46" height="46" viewBox="0 0 46 46"><circle cx="23" cy="23" r="21.6" fill="#fff" stroke="#e4e7ee" stroke-width="1.6"/></svg>
<div class="t" style="top:791.8px;font-size:21px;line-height:25px;color:#111;font-weight:400;letter-spacing:0px;left:1300px;width:1200px;text-align:center;">XS</div>
<svg class="a" style="left:1931px;top:781px" width="46" height="46" viewBox="0 0 46 46"><circle cx="23" cy="23" r="21.6" fill="#fff" stroke="#e4e7ee" stroke-width="1.6"/></svg>
<div class="t" style="top:791.8px;font-size:21px;line-height:25px;color:#111;font-weight:400;letter-spacing:0px;left:1354px;width:1200px;text-align:center;">S</div>
<svg class="a" style="left:1985px;top:781px" width="46" height="46" viewBox="0 0 46 46"><circle cx="23" cy="23" r="21.3" fill="#fff" stroke="#2f6fcf" stroke-width="2.2"/></svg>
<div class="t" style="top:791.8px;font-size:21px;line-height:25px;color:#111;font-weight:400;letter-spacing:0px;left:1408px;width:1200px;text-align:center;">M</div>
<svg class="a" style="left:2039px;top:781px" width="46" height="46" viewBox="0 0 46 46"><circle cx="23" cy="23" r="21.6" fill="#fff" stroke="#e4e7ee" stroke-width="1.6"/></svg>
<div class="t" style="top:791.8px;font-size:21px;line-height:25px;color:#111;font-weight:400;letter-spacing:0px;left:1462px;width:1200px;text-align:center;">L</div>
<svg class="a" style="left:2093px;top:781px" width="46" height="46" viewBox="0 0 46 46"><circle cx="23" cy="23" r="21.6" fill="#fff" stroke="#e4e7ee" stroke-width="1.6"/></svg>
<div class="t" style="top:791.8px;font-size:21px;line-height:25px;color:#111;font-weight:400;letter-spacing:0px;left:1516px;width:1200px;text-align:center;">XL</div>
<svg class="a" style="left:2148px;top:795px" width="36" height="36" viewBox="0 0 36 36"><polygon points="18.00,1.50 22.82,12.37 34.64,13.59 25.80,21.53 28.29,33.16 18.00,27.20 7.71,33.16 10.20,21.53 1.36,13.59 13.18,12.37" fill="#f4b13f" stroke="#f4b13f" stroke-width="3" stroke-linejoin="round"/></svg>
<div class="a" style="left:232px;top:832px;width:1961px;height:2px;background:#efefef"></div>
<div class="t" style="top:849.2px;font-size:24px;line-height:29px;color:#4a7ec1;font-weight:400;letter-spacing:0.39px;left:245px;">EP0004 - AI Based Portfolio Optimizer</div>
<div class="a" style="left:844px;top:838px;width:138px;height:49px;background:#ec6e6b;border-radius:5px"></div>
<div class="t" style="top:849.2px;font-size:24px;line-height:29px;color:#fff;font-weight:400;letter-spacing:0.5px;left:-229px;width:1200px;text-align:right;">4.25</div>
<div class="t" style="top:849.2px;font-size:24px;line-height:29px;color:#444;font-weight:400;letter-spacing:0.5px;left:21px;width:1200px;text-align:right;">34</div>
<div class="a" style="left:1244px;top:838px;width:278px;height:49px;background:#e8e3b8"></div>
<div class="t" style="top:849.2px;font-size:24px;line-height:29px;color:#222;font-weight:400;letter-spacing:0.5px;left:1255px;">Lowest</div>
<div class="a" style="left:1544px;top:838px;width:278px;height:49px;background:#f4b150"></div>
<div class="t" style="top:849.2px;font-size:24px;line-height:29px;color:#222;font-weight:400;letter-spacing:0.5px;left:1555px;">High</div>
<svg class="a" style="left:1877px;top:839px" width="46" height="46" viewBox="0 0 46 46"><circle cx="23" cy="23" r="21.6" fill="#fff" stroke="#e4e7ee" stroke-width="1.6"/></svg>
<div class="t" style="top:849.8px;font-size:21px;line-height:25px;color:#111;font-weight:400;letter-spacing:0px;left:1300px;width:1200px;text-align:center;">XS</div>
<svg class="a" style="left:1931px;top:839px" width="46" height="46" viewBox="0 0 46 46"><circle cx="23" cy="23" r="21.6" fill="#fff" stroke="#e4e7ee" stroke-width="1.6"/></svg>
<div class="t" style="top:849.8px;font-size:21px;line-height:25px;color:#111;font-weight:400;letter-spacing:0px;left:1354px;width:1200px;text-align:center;">S</div>
<svg class="a" style="left:1985px;top:839px" width="46" height="46" viewBox="0 0 46 46"><circle cx="23" cy="23" r="21.3" fill="#fff" stroke="#2f6fcf" stroke-width="2.2"/></svg>
<div class="t" style="top:849.8px;font-size:21px;line-height:25px;color:#111;font-weight:400;letter-spacing:0px;left:1408px;width:1200px;text-align:center;">M</div>
<svg class="a" style="left:2039px;top:839px" width="46" height="46" viewBox="0 0 46 46"><circle cx="23" cy="23" r="21.6" fill="#fff" stroke="#e4e7ee" stroke-width="1.6"/></svg>
<div class="t" style="top:849.8px;font-size:21px;line-height:25px;color:#111;font-weight:400;letter-spacing:0px;left:1462px;width:1200px;text-align:center;">L</div>
<svg class="a" style="left:2093px;top:839px" width="46" height="46" viewBox="0 0 46 46"><circle cx="23" cy="23" r="21.6" fill="#fff" stroke="#e4e7ee" stroke-width="1.6"/></svg>
<div class="t" style="top:849.8px;font-size:21px;line-height:25px;color:#111;font-weight:400;letter-spacing:0px;left:1516px;width:1200px;text-align:center;">XL</div>
<svg class="a" style="left:2148px;top:853px" width="36" height="36" viewBox="0 0 36 36"><polygon points="18.00,1.50 22.82,12.37 34.64,13.59 25.80,21.53 28.29,33.16 18.00,27.20 7.71,33.16 10.20,21.53 1.36,13.59 13.18,12.37" fill="#f4b13f" stroke="#f4b13f" stroke-width="3" stroke-linejoin="round"/></svg>
<div class="a" style="left:232px;top:890px;width:1961px;height:2px;background:#efefef"></div>
<div class="t" style="top:907.3px;font-size:24px;line-height:29px;color:#4a7ec1;font-weight:400;letter-spacing:0.39px;left:245px;">EP0011 - DEVOPS Integration</div>
<div class="a" style="left:844px;top:896px;width:138px;height:49px;background:#ec6e6b;border-radius:5px"></div>
<div class="t" style="top:907.3px;font-size:24px;line-height:29px;color:#fff;font-weight:400;letter-spacing:0.5px;left:-229px;width:1200px;text-align:right;">5.13</div>
<div class="t" style="top:907.3px;font-size:24px;line-height:29px;color:#444;font-weight:400;letter-spacing:0.5px;left:21px;width:1200px;text-align:right;">41</div>
<div class="a" style="left:1244px;top:896px;width:278px;height:49px;background:#f4c3cb"></div>
<div class="t" style="top:907.3px;font-size:24px;line-height:29px;color:#222;font-weight:400;letter-spacing:0.5px;left:1255px;">Low</div>
<div class="a" style="left:1544px;top:896px;width:278px;height:49px;background:#e4807a"></div>
<div class="t" style="top:907.3px;font-size:24px;line-height:29px;color:#222;font-weight:400;letter-spacing:0.5px;left:1555px;">Highest</div>
<svg class="a" style="left:1877px;top:897px" width="46" height="46" viewBox="0 0 46 46"><circle cx="23" cy="23" r="21.6" fill="#fff" stroke="#e4e7ee" stroke-width="1.6"/></svg>
<div class="t" style="top:907.9px;font-size:21px;line-height:25px;color:#111;font-weight:400;letter-spacing:0px;left:1300px;width:1200px;text-align:center;">XS</div>
<svg class="a" style="left:1931px;top:897px" width="46" height="46" viewBox="0 0 46 46"><circle cx="23" cy="23" r="21.6" fill="#fff" stroke="#e4e7ee" stroke-width="1.6"/></svg>
<div class="t" style="top:907.9px;font-size:21px;line-height:25px;color:#111;font-weight:400;letter-spacing:0px;left:1354px;width:1200px;text-align:center;">S</div>
<svg class="a" style="left:1985px;top:897px" width="46" height="46" viewBox="0 0 46 46"><circle cx="23" cy="23" r="21.3" fill="#fff" stroke="#2f6fcf" stroke-width="2.2"/></svg>
<div class="t" style="top:907.9px;font-size:21px;line-height:25px;color:#111;font-weight:400;letter-spacing:0px;left:1408px;width:1200px;text-align:center;">M</div>
<svg class="a" style="left:2039px;top:897px" width="46" height="46" viewBox="0 0 46 46"><circle cx="23" cy="23" r="21.6" fill="#fff" stroke="#e4e7ee" stroke-width="1.6"/></svg>
<div class="t" style="top:907.9px;font-size:21px;line-height:25px;color:#111;font-weight:400;letter-spacing:0px;left:1462px;width:1200px;text-align:center;">L</div>
<svg class="a" style="left:2093px;top:897px" width="46" height="46" viewBox="0 0 46 46"><circle cx="23" cy="23" r="21.6" fill="#fff" stroke="#e4e7ee" stroke-width="1.6"/></svg>
<div class="t" style="top:907.9px;font-size:21px;line-height:25px;color:#111;font-weight:400;letter-spacing:0px;left:1516px;width:1200px;text-align:center;">XL</div>
<svg class="a" style="left:2148px;top:911px" width="36" height="36" viewBox="0 0 36 36"><polygon points="18.00,1.50 22.82,12.37 34.64,13.59 25.80,21.53 28.29,33.16 18.00,27.20 7.71,33.16 10.20,21.53 1.36,13.59 13.18,12.37" fill="#f4b13f" stroke="#f4b13f" stroke-width="3" stroke-linejoin="round"/></svg>
<div class="a" style="left:232px;top:949px;width:1961px;height:2px;background:#efefef"></div>
<div class="t" style="top:965.3px;font-size:24px;line-height:29px;color:#4a7ec1;font-weight:400;letter-spacing:0.39px;left:245px;">EP0024 - Commercial Partnership Manual</div>
<div class="a" style="left:844px;top:955px;width:138px;height:49px;background:#ec6e6b;border-radius:5px"></div>
<div class="t" style="top:965.3px;font-size:24px;line-height:29px;color:#fff;font-weight:400;letter-spacing:0.5px;left:-229px;width:1200px;text-align:right;">7.20</div>
<div class="t" style="top:965.3px;font-size:24px;line-height:29px;color:#444;font-weight:400;letter-spacing:0.5px;left:21px;width:1200px;text-align:right;">36</div>
<div class="a" style="left:1244px;top:955px;width:278px;height:49px;background:#e8e3b8"></div>
<div class="t" style="top:965.3px;font-size:24px;line-height:29px;color:#222;font-weight:400;letter-spacing:0.5px;left:1255px;">Lowest</div>
<div class="a" style="left:1544px;top:955px;width:278px;height:49px;background:#e4807a"></div>
<div class="t" style="top:965.3px;font-size:24px;line-height:29px;color:#222;font-weight:400;letter-spacing:0.5px;left:1555px;">Highest</div>
<svg class="a" style="left:1877px;top:955px" width="46" height="46" viewBox="0 0 46 46"><circle cx="23" cy="23" r="21.6" fill="#fff" stroke="#e4e7ee" stroke-width="1.6"/></svg>
<div class="t" style="top:965.9px;font-size:21px;line-height:25px;color:#111;font-weight:400;letter-spacing:0px;left:1300px;width:1200px;text-align:center;">XS</div>
<svg class="a" style="left:1931px;top:955px" width="46" height="46" viewBox="0 0 46 46"><circle cx="23" cy="23" r="21.3" fill="#fff" stroke="#2f6fcf" stroke-width="2.2"/></svg>
<div class="t" style="top:965.9px;font-size:21px;line-height:25px;color:#111;font-weight:400;letter-spacing:0px;left:1354px;width:1200px;text-align:center;">S</div>
<svg class="a" style="left:1985px;top:955px" width="46" height="46" viewBox="0 0 46 46"><circle cx="23" cy="23" r="21.6" fill="#fff" stroke="#e4e7ee" stroke-width="1.6"/></svg>
<div class="t" style="top:965.9px;font-size:21px;line-height:25px;color:#111;font-weight:400;letter-spacing:0px;left:1408px;width:1200px;text-align:center;">M</div>
<svg class="a" style="left:2039px;top:955px" width="46" height="46" viewBox="0 0 46 46"><circle cx="23" cy="23" r="21.6" fill="#fff" stroke="#e4e7ee" stroke-width="1.6"/></svg>
<div class="t" style="top:965.9px;font-size:21px;line-height:25px;color:#111;font-weight:400;letter-spacing:0px;left:1462px;width:1200px;text-align:center;">L</div>
<svg class="a" style="left:2093px;top:955px" width="46" height="46" viewBox="0 0 46 46"><circle cx="23" cy="23" r="21.6" fill="#fff" stroke="#e4e7ee" stroke-width="1.6"/></svg>
<div class="t" style="top:965.9px;font-size:21px;line-height:25px;color:#111;font-weight:400;letter-spacing:0px;left:1516px;width:1200px;text-align:center;">XL</div>
<svg class="a" style="left:2148px;top:970px" width="36" height="36" viewBox="0 0 36 36"><polygon points="18.00,1.50 22.82,12.37 34.64,13.59 25.80,21.53 28.29,33.16 18.00,27.20 7.71,33.16 10.20,21.53 1.36,13.59 13.18,12.37" fill="#f4b13f" stroke="#f4b13f" stroke-width="3" stroke-linejoin="round"/></svg>
<div class="a" style="left:232px;top:1007px;width:1961px;height:2px;background:#ececec"></div>
<div class="a" style="left:232px;top:1056px;width:1961px;height:21px;background:#f1f1f1"></div>
<div class="a" style="left:232px;top:1056px;width:1951px;height:20px;background:#b8b8b8;border-radius:10px"></div>
<div class="a" style="left:232px;top:1076px;width:1961px;height:89px;background:#f9f9f9;border:1.5px solid #e2e2e2;box-sizing:border-box"></div>
<div class="a" style="left:1872px;top:1103px;width:35px;height:35px;border:2px solid #4a7ec1;box-sizing:border-box;background:#fff"></div>
<div class="t" style="top:1105.5px;font-size:26px;line-height:31px;color:#4a7ec1;font-weight:700;letter-spacing:0px;left:1289.5px;width:1200px;text-align:center;font-family:'Liberation Serif',serif;">1</div>
<div class="t" style="top:1108.0px;font-size:24px;line-height:29px;color:#444;font-weight:400;letter-spacing:0px;left:1331px;width:1200px;text-align:center;">2</div>
<div class="a" style="left:1960px;top:1099.5px;width:199px;height:43px;background:#fff;border:1.5px solid #d8d8d8;border-radius:3px;box-sizing:border-box"></div>
<div class="t" style="top:1108.0px;font-size:24px;line-height:29px;color:#8a8a8a;font-weight:400;letter-spacing:0.25px;left:1972px;">10 Per Page</div>
<svg class="a" style="left:2128px;top:1113px" width="24" height="16" viewBox="0 0 24 16"><path d="M1.5 1.5 L12.0 14 L22.5 1.5" fill="none" stroke="#999" stroke-width="2.4"/></svg>
<div class="a" style="left:2238px;top:267px;width:1062px;height:911px;background:#fff"></div>
<svg class="a" style="left:2261.5px;top:308.5px" width="28" height="19" viewBox="0 0 28 19"><path d="M1.5 1.5 L14.0 17 L26.5 1.5" fill="none" stroke="#444" stroke-width="2.6"/></svg>
<div class="t" style="top:300.5px;font-size:29px;line-height:35px;color:#606060;font-weight:700;letter-spacing:-0.05px;left:2309px;">Scenario Analysis</div>
<svg class="a" style="left:3196px;top:303px" width="31" height="31" viewBox="0 0 31 31"><g transform="translate(15.5,15.5)"><circle r="9.5" fill="none" stroke="#000" stroke-width="6.5"/><rect x="-3.6" y="-15.5" width="7.2" height="7" rx="1.6" fill="#000" transform="rotate(0)"/><rect x="-3.6" y="-15.5" width="7.2" height="7" rx="1.6" fill="#000" transform="rotate(45)"/><rect x="-3.6" y="-15.5" width="7.2" height="7" rx="1.6" fill="#000" transform="rotate(90)"/><rect x="-3.6" y="-15.5" width="7.2" height="7" rx="1.6" fill="#000" transform="rotate(135)"/><rect x="-3.6" y="-15.5" width="7.2" height="7" rx="1.6" fill="#000" transform="rotate(180)"/><rect x="-3.6" y="-15.5" width="7.2" height="7" rx="1.6" fill="#000" transform="rotate(225)"/><rect x="-3.6" y="-15.5" width="7.2" height="7" rx="1.6" fill="#000" transform="rotate(270)"/><rect x="-3.6" y="-15.5" width="7.2" height="7" rx="1.6" fill="#000" transform="rotate(315)"/></g></svg>
<svg class="a" style="left:3246px;top:303px" width="31" height="31" viewBox="0 0 31 31"><g fill="#000" stroke="#000" stroke-linejoin="round" stroke-linecap="round"><g transform=""><path d="M1.6 1.6 L10.2 1.6 L1.6 10.2 Z" stroke-width="2.4"/><path d="M5 5 L12 12" stroke-width="4.3" fill="none"/></g><g transform="translate(31,0) scale(-1,1)"><path d="M1.6 1.6 L10.2 1.6 L1.6 10.2 Z" stroke-width="2.4"/><path d="M5 5 L12 12" stroke-width="4.3" fill="none"/></g><g transform="translate(0,31) scale(1,-1)"><path d="M1.6 1.6 L10.2 1.6 L1.6 10.2 Z" stroke-width="2.4"/><path d="M5 5 L12 12" stroke-width="4.3" fill="none"/></g><g transform="translate(31,31) scale(-1,-1)"><path d="M1.6 1.6 L10.2 1.6 L1.6 10.2 Z" stroke-width="2.4"/><path d="M5 5 L12 12" stroke-width="4.3" fill="none"/></g></g></svg>
<svg class="a" style="left:2370px;top:333px" width="800" height="800" viewBox="0 0 800 800"><circle cx="400" cy="400" r="40" fill="none" stroke="#ececec" stroke-width="2"/><circle cx="400" cy="400" r="120" fill="none" stroke="#ececec" stroke-width="2"/><circle cx="400" cy="400" r="200" fill="none" stroke="#ececec" stroke-width="2"/><circle cx="400" cy="400" r="280" fill="none" stroke="#ececec" stroke-width="2"/><circle cx="400" cy="400" r="80" fill="none" stroke="#cdcdcd" stroke-width="2"/><circle cx="400" cy="400" r="160" fill="none" stroke="#cdcdcd" stroke-width="2"/><circle cx="400" cy="400" r="240" fill="none" stroke="#cdcdcd" stroke-width="2"/><circle cx="400" cy="400" r="320" fill="none" stroke="#cdcdcd" stroke-width="2"/><line x1="48" y1="400" x2="752" y2="400" stroke="#cccccc" stroke-width="2"/><line x1="400" y1="400" x2="400" y2="752" stroke="#cccccc" stroke-width="2"/><circle cx="400" cy="400" r="352" fill="none" stroke="#6e6e6e" stroke-width="2.2"/><line x1="400" y1="400" x2="400" y2="36" stroke="#6e6e6e" stroke-width="2"/><line x1="35" y1="400" x2="48" y2="400" stroke="#6e6e6e" stroke-width="2"/><line x1="752" y1="400" x2="765" y2="400" stroke="#6e6e6e" stroke-width="2"/><line x1="400" y1="752" x2="400" y2="765" stroke="#6e6e6e" stroke-width="2"/><path d="M400 400 L442.53 234.37 A171 171 0 0 1 478.56 248.11 Z" fill="#5b9bd5" fill-opacity="0.58"/><path d="M400 400 L457.15 302.98 A112.6 112.6 0 0 1 477.44 318.26 Z" fill="#7cc571" fill-opacity="0.58"/><path d="M400 400 L490.10 314.80 A124 124 0 0 1 506.90 337.16 Z" fill="#edb356" fill-opacity="0.58"/><path d="M400 400 L539.51 327.99 A157 157 0 0 1 552.10 361.09 Z" fill="#c7524f" fill-opacity="0.58"/><path d="M400 400 L621.81 456.95 A229 229 0 0 1 603.40 505.21 Z" fill="#5b9bd5" fill-opacity="0.58"/><path d="M400 400 L586.80 510.03 A216.8 216.8 0 0 1 557.39 549.10 Z" fill="#7cc571" fill-opacity="0.58"/><path d="M400 400 L526.77 534.05 A184.5 184.5 0 0 1 493.50 559.05 Z" fill="#edb356" fill-opacity="0.58"/><path d="M400 400 L489.34 573.10 A194.8 194.8 0 0 1 448.28 588.72 Z" fill="#c7524f" fill-opacity="0.58"/><path d="M400 400 L345.79 611.15 A218 218 0 0 1 299.85 593.63 Z" fill="#5b9bd5" fill-opacity="0.58"/><path d="M400 400 L305.85 559.83 A185.5 185.5 0 0 1 272.43 534.67 Z" fill="#7cc571" fill-opacity="0.58"/><path d="M400 400 L279.82 513.64 A165.4 165.4 0 0 1 257.41 483.82 Z" fill="#edb356" fill-opacity="0.58"/><path d="M400 400 L224.05 490.81 A198 198 0 0 1 208.18 449.07 Z" fill="#c7524f" fill-opacity="0.58"/><path d="M400 400 L59.64 312.61 A351.4 351.4 0 0 1 87.88 238.56 Z" fill="#5b9bd5" fill-opacity="0.58"/><path d="M400 400 L156.68 256.67 A282.4 282.4 0 0 1 194.98 205.79 Z" fill="#7cc571" fill-opacity="0.58"/><path d="M400 400 L200.74 189.29 A290 290 0 0 1 253.03 150.00 Z" fill="#edb356" fill-opacity="0.58"/><path d="M400 400 L268.00 144.26 A287.8 287.8 0 0 1 328.67 121.18 Z" fill="#c7524f" fill-opacity="0.58"/></svg>
<div class="t" style="top:711.5px;font-size:22px;line-height:26px;color:#6e6e6e;font-weight:400;letter-spacing:0px;left:2170px;width:1200px;text-align:center;">0</div>
<div class="t" style="top:631.5px;font-size:22px;line-height:26px;color:#6e6e6e;font-weight:400;letter-spacing:0px;left:2170px;width:1200px;text-align:center;">50</div>
<div class="t" style="top:551.5px;font-size:22px;line-height:26px;color:#6e6e6e;font-weight:400;letter-spacing:0px;left:2170px;width:1200px;text-align:center;">100</div>
<div class="t" style="top:471.5px;font-size:22px;line-height:26px;color:#6e6e6e;font-weight:400;letter-spacing:0px;left:2170px;width:1200px;text-align:center;">150</div>
<div class="t" style="top:391.5px;font-size:22px;line-height:26px;color:#6e6e6e;font-weight:400;letter-spacing:0px;left:2170px;width:1200px;text-align:center;">200</div>
<div class="a" style="left:2314px;top:1122px;width:23.8px;height:23.8px;background:#9ec4e9"></div>
<div class="t" style="top:1118.6px;font-size:24px;line-height:29px;color:#777;font-weight:400;letter-spacing:0px;left:2352.8px;">Master Scenario</div>
<div class="a" style="left:2538px;top:1122px;width:23.8px;height:23.8px;background:#b6dfb0"></div>
<div class="t" style="top:1118.6px;font-size:24px;line-height:29px;color:#777;font-weight:400;letter-spacing:0px;left:2576.5px;">Optimizad Q1</div>
<div class="a" style="left:2736.3px;top:1122px;width:23.8px;height:23.8px;background:#f6d4a1"></div>
<div class="t" style="top:1118.6px;font-size:24px;line-height:29px;color:#777;font-weight:400;letter-spacing:-0.2px;left:2774.8px;">Proposal for STERCo</div>
<div class="a" style="left:3014px;top:1122px;width:23.8px;height:23.8px;background:#e1a19e"></div>
<div class="t" style="top:1118.6px;font-size:24px;line-height:29px;color:#777;font-weight:400;letter-spacing:-0.5px;left:3052.5px;">Q1 STERCO SC</div>
<div class="a" style="left:3300px;top:267px;width:20px;height:1654px;background:#ededee"></div>
<div class="a" style="left:3300px;top:268px;width:20px;height:1470px;background:#b8b8b8;border-radius:10px"></div>
<div class="a" style="left:0;top:0;width:3360px;height:1921.5px;overflow:hidden">
<div class="a" style="left:208px;top:1198px;width:3092px;height:724px;background:#fff"></div>
<svg class="a" style="left:231.5px;top:1237.5px" width="28" height="19" viewBox="0 0 28 19"><path d="M1.5 1.5 L14.0 17 L26.5 1.5" fill="none" stroke="#444" stroke-width="2.6"/></svg>
<div class="t" style="top:1231.0px;font-size:29px;line-height:35px;color:#606060;font-weight:700;letter-spacing:-0.7px;left:279px;">EPICS</div>
<div class="t" style="top:1233.1px;font-size:28px;line-height:34px;color:#222;font-weight:400;letter-spacing:0.44px;left:2877.6px;">14 Selected</div>
<div class="a" style="left:3048px;top:1220px;width:152px;height:56px;background:#4c80c1;border-radius:4px"></div>
<div class="t" style="top:1234.6px;font-size:24px;line-height:29px;color:#fff;font-weight:400;letter-spacing:0.2px;left:2524px;width:1200px;text-align:center;">Release</div>
<svg class="a" style="left:3216px;top:1230px" width="31" height="31" viewBox="0 0 31 31"><g fill="#000" stroke="#000" stroke-linejoin="round" stroke-linecap="round"><g transform=""><path d="M1.6 1.6 L10.2 1.6 L1.6 10.2 Z" stroke-width="2.4"/><path d="M5 5 L12 12" stroke-width="4.3" fill="none"/></g><g transform="translate(31,0) scale(-1,1)"><path d="M1.6 1.6 L10.2 1.6 L1.6 10.2 Z" stroke-width="2.4"/><path d="M5 5 L12 12" stroke-width="4.3" fill="none"/></g><g transform="translate(0,31) scale(1,-1)"><path d="M1.6 1.6 L10.2 1.6 L1.6 10.2 Z" stroke-width="2.4"/><path d="M5 5 L12 12" stroke-width="4.3" fill="none"/></g><g transform="translate(31,31) scale(-1,-1)"><path d="M1.6 1.6 L10.2 1.6 L1.6 10.2 Z" stroke-width="2.4"/><path d="M5 5 L12 12" stroke-width="4.3" fill="none"/></g></g></svg>
<svg class="a" style="left:3262px;top:1228px" width="12" height="36" viewBox="0 0 12 36"><circle cx="6" cy="6.5" r="4.6" fill="#000"/><circle cx="6" cy="17.5" r="4.6" fill="#000"/><circle cx="6" cy="28.5" r="4.6" fill="#000"/></svg>
<div class="a" style="left:232px;top:1298px;width:3044px;height:57px;background:#f8f8f8;border-top:2px solid #e6e6e6;box-sizing:border-box"></div>
<div class="a" style="left:232px;top:1354px;width:3044px;height:2px;background:#ececec"></div>
<div class="a" style="left:291px;top:1300px;width:2px;height:55px;background:#ececec"></div>
<div class="a" style="left:351px;top:1300px;width:2px;height:55px;background:#ececec"></div>
<div class="a" style="left:751px;top:1300px;width:2px;height:55px;background:#ececec"></div>
<div class="a" style="left:1088px;top:1300px;width:2px;height:55px;background:#ececec"></div>
<div class="a" style="left:1248px;top:1300px;width:2px;height:55px;background:#ececec"></div>
<div class="a" style="left:1408px;top:1300px;width:2px;height:55px;background:#ececec"></div>
<div class="a" style="left:1608px;top:1300px;width:2px;height:55px;background:#ececec"></div>
<div class="a" style="left:1808px;top:1300px;width:2px;height:55px;background:#ececec"></div>
<div class="a" style="left:2168px;top:1300px;width:2px;height:55px;background:#ececec"></div>
<div class="a" style="left:2308px;top:1300px;width:2px;height:55px;background:#ececec"></div>
<div class="a" style="left:2508px;top:1300px;width:2px;height:55px;background:#ececec"></div>
<div class="a" style="left:2708px;top:1300px;width:2px;height:55px;background:#ececec"></div>
<div class="a" style="left:2988px;top:1300px;width:2px;height:55px;background:#ececec"></div>
<div class="a" style="left:3188px;top:1300px;width:2px;height:55px;background:#ececec"></div>
<div class="a" style="left:231px;top:1298px;width:2px;height:57px;background:#e6e6e6"></div>
<svg class="a" style="left:247px;top:1308px" width="32" height="32" viewBox="0 0 32 32"><rect x="0" y="0" width="32" height="32" rx="5" fill="#4a7ec1"/><path d="M8 16.5 L13.5 22 L24.5 10.5" fill="none" stroke="#fff" stroke-width="3.6" stroke-linecap="round" stroke-linejoin="round"/></svg>
<div class="t" style="top:1311.8px;font-size:24px;line-height:29px;color:#484848;font-weight:700;letter-spacing:0.5px;left:365px;">Title</div>
<svg class="a" style="left:714px;top:1315px" width="28" height="29" viewBox="0 0 28 29"><path d="M0 0 L28 0 L18.2 12.7 L9.6 12.7 Z" fill="#d6d6d6"/><path d="M11 15 L17.1 15 L17.1 24.4 L11 27.7 Z" fill="#d6d6d6"/></svg>
<div class="t" style="top:1311.8px;font-size:24px;line-height:29px;color:#484848;font-weight:700;letter-spacing:0.5px;left:764px;">Progress</div>
<div class="t" style="top:1311.8px;font-size:24px;line-height:29px;color:#484848;font-weight:700;letter-spacing:0.5px;left:1101px;">WSJF</div>
<svg class="a" style="left:1210px;top:1315px" width="28" height="29" viewBox="0 0 28 29"><path d="M0 0 L28 0 L18.2 12.7 L9.6 12.7 Z" fill="#d6d6d6"/><path d="M11 15 L17.1 15 L17.1 24.4 L11 27.7 Z" fill="#d6d6d6"/></svg>
<div class="t" style="top:1311.8px;font-size:24px;line-height:29px;color:#484848;font-weight:700;letter-spacing:0.5px;left:1261px;">State</div>
<svg class="a" style="left:1370px;top:1315px" width="28" height="29" viewBox="0 0 28 29"><path d="M0 0 L28 0 L18.2 12.7 L9.6 12.7 Z" fill="#d6d6d6"/><path d="M11 15 L17.1 15 L17.1 24.4 L11 27.7 Z" fill="#d6d6d6"/></svg>
<div class="t" style="top:1311.8px;font-size:24px;line-height:29px;color:#484848;font-weight:700;letter-spacing:0.5px;left:1421px;width:143px;overflow:hidden;white-space:nowrap;">Initiative Manager</div>
<svg class="a" style="left:1570px;top:1315px" width="28" height="29" viewBox="0 0 28 29"><path d="M0 0 L28 0 L18.2 12.7 L9.6 12.7 Z" fill="#d6d6d6"/><path d="M11 15 L17.1 15 L17.1 24.4 L11 27.7 Z" fill="#d6d6d6"/></svg>
<div class="t" style="top:1311.8px;font-size:24px;line-height:29px;color:#484848;font-weight:700;letter-spacing:0.5px;left:1620px;">Category</div>
<svg class="a" style="left:1770px;top:1315px" width="28" height="29" viewBox="0 0 28 29"><path d="M0 0 L28 0 L18.2 12.7 L9.6 12.7 Z" fill="#d6d6d6"/><path d="M11 15 L17.1 15 L17.1 24.4 L11 27.7 Z" fill="#d6d6d6"/></svg>
<div class="t" style="top:1311.8px;font-size:24px;line-height:29px;color:#484848;font-weight:700;letter-spacing:0.5px;left:1826.5px;">Risk Score (Average)</div>
<svg class="a" style="left:2130px;top:1315px" width="28" height="29" viewBox="0 0 28 29"><path d="M0 0 L28 0 L18.2 12.7 L9.6 12.7 Z" fill="#d6d6d6"/><path d="M11 15 L17.1 15 L17.1 24.4 L11 27.7 Z" fill="#d6d6d6"/></svg>
<div class="t" style="top:1311.8px;font-size:24px;line-height:29px;color:#484848;font-weight:700;letter-spacing:0.5px;left:2187px;">In/Out</div>
<div class="t" style="top:1311.8px;font-size:24px;line-height:29px;color:#484848;font-weight:700;letter-spacing:0.5px;left:2320.6px;width:142px;overflow:hidden;white-space:nowrap;">Strategic Priority</div>
<svg class="a" style="left:2470px;top:1315px" width="28" height="29" viewBox="0 0 28 29"><path d="M0 0 L28 0 L18.2 12.7 L9.6 12.7 Z" fill="#d6d6d6"/><path d="M11 15 L17.1 15 L17.1 24.4 L11 27.7 Z" fill="#d6d6d6"/></svg>
<div class="t" style="top:1311.8px;font-size:24px;line-height:29px;color:#484848;font-weight:700;letter-spacing:0.5px;left:2527px;">Cost</div>
<svg class="a" style="left:2670px;top:1315px" width="28" height="29" viewBox="0 0 28 29"><path d="M0 0 L28 0 L18.2 12.7 L9.6 12.7 Z" fill="#d6d6d6"/><path d="M11 15 L17.1 15 L17.1 24.4 L11 27.7 Z" fill="#d6d6d6"/></svg>
<div class="t" style="top:1311.8px;font-size:24px;line-height:29px;color:#484848;font-weight:700;letter-spacing:0.5px;left:2720.7px;">Start</div>
<svg class="a" style="left:2950px;top:1315px" width="28" height="29" viewBox="0 0 28 29"><path d="M0 0 L28 0 L18.2 12.7 L9.6 12.7 Z" fill="#d6d6d6"/><path d="M11 15 L17.1 15 L17.1 24.4 L11 27.7 Z" fill="#d6d6d6"/></svg>
<div class="t" style="top:1311.8px;font-size:24px;line-height:29px;color:#484848;font-weight:700;letter-spacing:0.5px;left:3006.8px;">Efforts</div>
<svg class="a" style="left:3149.5px;top:1315px" width="28" height="29" viewBox="0 0 28 29"><path d="M0 0 L28 0 L18.2 12.7 L9.6 12.7 Z" fill="#d6d6d6"/><path d="M11 15 L17.1 15 L17.1 24.4 L11 27.7 Z" fill="#d6d6d6"/></svg>
<div class="t" style="top:1311.8px;font-size:24px;line-height:29px;color:#484848;font-weight:700;letter-spacing:0.5px;left:3206.8px;width:69.19999999999982px;overflow:hidden;white-space:nowrap;">Benefits</div>
<svg class="a" style="left:2280px;top:1314px" width="14" height="22" viewBox="0 0 14 22"><path d="M7.3 5 L7.3 21.5" stroke="#222" stroke-width="2"/><path d="M3.5 6 L11 6 L7.3 1.5 Z" fill="#222"/></svg>
<svg class="a" style="left:313px;top:1376px" width="20" height="11" viewBox="0 0 20 11"><path d="M0 0 L20 0 L10 11 Z" fill="#444"/></svg>
<div class="t" style="top:1368.0px;font-size:24px;line-height:29px;color:#444;font-weight:700;letter-spacing:0.45px;left:363px;">Product: AI Enabler</div>
<div class="a" style="left:232px;top:1411px;width:3044px;height:180px;background:#f1f8fd"></div>
<div class="a" style="left:232px;top:1410px;width:3044px;height:2px;background:#ebebeb"></div>
<div class="a" style="left:291px;top:1411px;width:2px;height:180px;background:#ebebeb"></div>
<div class="a" style="left:351px;top:1411px;width:2px;height:180px;background:#ebebeb"></div>
<div class="a" style="left:751px;top:1411px;width:2px;height:180px;background:#ebebeb"></div>
<div class="a" style="left:1088px;top:1411px;width:2px;height:180px;background:#ebebeb"></div>
<div class="a" style="left:1248px;top:1411px;width:2px;height:180px;background:#ebebeb"></div>
<div class="a" style="left:1408px;top:1411px;width:2px;height:180px;background:#ebebeb"></div>
<div class="a" style="left:1608px;top:1411px;width:2px;height:180px;background:#ebebeb"></div>
<div class="a" style="left:1808px;top:1411px;width:2px;height:180px;background:#ebebeb"></div>
<div class="a" style="left:2168px;top:1411px;width:2px;height:180px;background:#ebebeb"></div>
<div class="a" style="left:2308px;top:1411px;width:2px;height:180px;background:#ebebeb"></div>
<div class="a" style="left:2508px;top:1411px;width:2px;height:180px;background:#ebebeb"></div>
<div class="a" style="left:2708px;top:1411px;width:2px;height:180px;background:#ebebeb"></div>
<div class="a" style="left:2988px;top:1411px;width:2px;height:180px;background:#ebebeb"></div>
<div class="a" style="left:3188px;top:1411px;width:2px;height:180px;background:#ebebeb"></div>
<div class="a" style="left:231px;top:1411px;width:2px;height:180px;background:#ebebeb"></div>
<div class="a" style="left:232px;top:1470px;width:3044px;height:2px;background:#ebebeb"></div>
<svg class="a" style="left:246px;top:1422px" width="32" height="32" viewBox="0 0 32 32"><rect x="0" y="0" width="32" height="32" rx="5" fill="#4a7ec1"/><path d="M8 16.5 L13.5 22 L24.5 10.5" fill="none" stroke="#fff" stroke-width="3.6" stroke-linecap="round" stroke-linejoin="round"/></svg>
<div class="t" style="top:1427.7px;font-size:24px;line-height:29px;color:#4a7ec1;font-weight:400;letter-spacing:0.6px;left:363px;">AI Based Portfolio Optimizer</div>
<div class="a" style="left:765px;top:1428px;width:32px;height:24px;background:#cdd977"></div>
<div class="a" style="left:801px;top:1428px;width:32px;height:24px;background:#cdd977"></div>
<div class="a" style="left:837px;top:1428px;width:32px;height:24px;background:#cdd977"></div>
<div class="a" style="left:873px;top:1428px;width:32px;height:24px;background:#cdd977"></div>
<div class="a" style="left:909px;top:1428px;width:32px;height:24px;background:#3b82c4"></div>
<div class="a" style="left:945px;top:1428px;width:32px;height:24px;background:#acd4ee"></div>
<div class="a" style="left:1101px;top:1424px;width:120px;height:39px;background:#ec6e6b;border-radius:5px"></div>
<div class="t" style="top:1429.7px;font-size:24px;line-height:29px;color:#fff;font-weight:400;letter-spacing:0.5px;left:-18px;width:1200px;text-align:right;">4.25</div>
<div class="t" style="top:1431.2px;font-size:22px;line-height:26px;color:#fff;font-weight:400;letter-spacing:0px;left:598.5px;width:1200px;text-align:center;">&#9733;</div>
<div class="t" style="top:1427.7px;font-size:24px;line-height:29px;color:#444;font-weight:400;letter-spacing:0.5px;left:1262px;">Implemen...</div>
<div class="t" style="top:1427.7px;font-size:24px;line-height:29px;color:#444;font-weight:400;letter-spacing:0.5px;left:1421.6px;">Tanuja Pandey</div>
<div class="t" style="top:1427.7px;font-size:24px;line-height:29px;color:#444;font-weight:400;letter-spacing:0.5px;left:1620px;">New Develop...</div>
<div class="t" style="top:1427.7px;font-size:24px;line-height:29px;color:#444;font-weight:400;letter-spacing:0.5px;left:958.5px;width:1200px;text-align:right;">16</div>
<div class="a" style="left:2208px;top:1427px;width:64px;height:32px;background:#e4e4e4;border:1.5px solid #f3a4a2;box-sizing:border-box"></div>
<div class="t" style="top:1430.8px;font-size:21px;line-height:25px;color:#e03333;font-weight:400;letter-spacing:0.4px;left:1640px;width:1200px;text-align:center;">OUT</div>
<div class="t" style="top:1427.7px;font-size:24px;line-height:29px;color:#444;font-weight:400;letter-spacing:0.5px;left:2322px;">Low</div>
<div class="t" style="top:1427.7px;font-size:24px;line-height:29px;color:#444;font-weight:400;letter-spacing:0.5px;left:1498px;width:1200px;text-align:right;">102,000</div>
<div class="t" style="top:1427.7px;font-size:24px;line-height:29px;color:#444;font-weight:400;letter-spacing:0.5px;left:2721px;">21/07/2021</div>
<div class="t" style="top:1427.7px;font-size:24px;line-height:29px;color:#444;font-weight:400;letter-spacing:0.5px;left:1978px;width:1200px;text-align:right;">1,949</div>
<div class="t" style="top:1427.7px;font-size:24px;line-height:29px;color:#444;font-weight:400;letter-spacing:0.5px;left:3263px;width:13px;overflow:hidden;white-space:nowrap;">3</div>
<div class="a" style="left:232px;top:1530px;width:3044px;height:2px;background:#ebebeb"></div>
<svg class="a" style="left:246px;top:1482px" width="32" height="32" viewBox="0 0 32 32"><rect x="0" y="0" width="32" height="32" rx="5" fill="#4a7ec1"/><path d="M8 16.5 L13.5 22 L24.5 10.5" fill="none" stroke="#fff" stroke-width="3.6" stroke-linecap="round" stroke-linejoin="round"/></svg>
<div class="t" style="top:1487.7px;font-size:24px;line-height:29px;color:#4a7ec1;font-weight:400;letter-spacing:0.6px;left:363px;">AI Based Time Tracker</div>
<div class="a" style="left:765px;top:1488px;width:32px;height:24px;background:#cdd977"></div>
<div class="a" style="left:801px;top:1488px;width:32px;height:24px;background:#cdd977"></div>
<div class="a" style="left:837px;top:1488px;width:32px;height:24px;background:#cdd977"></div>
<div class="a" style="left:873px;top:1488px;width:32px;height:24px;background:#3b82c4"></div>
<div class="a" style="left:909px;top:1488px;width:32px;height:24px;background:#acd4ee"></div>
<div class="a" style="left:945px;top:1488px;width:32px;height:24px;background:#acd4ee"></div>
<div class="a" style="left:1101px;top:1484px;width:120px;height:39px;background:#ec6e6b;border-radius:5px"></div>
<div class="t" style="top:1489.7px;font-size:24px;line-height:29px;color:#fff;font-weight:400;letter-spacing:0.5px;left:-18px;width:1200px;text-align:right;">2.15</div>
<div class="t" style="top:1491.2px;font-size:22px;line-height:26px;color:#fff;font-weight:400;letter-spacing:0px;left:598.5px;width:1200px;text-align:center;">&#9733;</div>
<div class="t" style="top:1487.7px;font-size:24px;line-height:29px;color:#444;font-weight:400;letter-spacing:0.5px;left:1262px;">Portfolio B...</div>
<div class="t" style="top:1487.7px;font-size:24px;line-height:29px;color:#444;font-weight:400;letter-spacing:0.5px;left:1421.6px;">Anne Flock</div>
<div class="t" style="top:1487.7px;font-size:24px;line-height:29px;color:#444;font-weight:400;letter-spacing:0.5px;left:1620px;">Refactoring</div>
<div class="t" style="top:1487.7px;font-size:24px;line-height:29px;color:#444;font-weight:400;letter-spacing:0.5px;left:958.5px;width:1200px;text-align:right;">12</div>
<div class="a" style="left:2208px;top:1487px;width:64px;height:32px;background:#e4e4e4;border:1.5px solid #f3a4a2;box-sizing:border-box"></div>
<div class="t" style="top:1490.8px;font-size:21px;line-height:25px;color:#e03333;font-weight:400;letter-spacing:0.4px;left:1640px;width:1200px;text-align:center;">OUT</div>
<div class="t" style="top:1487.7px;font-size:24px;line-height:29px;color:#444;font-weight:400;letter-spacing:0.5px;left:2322px;">Medium</div>
<div class="t" style="top:1487.7px;font-size:24px;line-height:29px;color:#444;font-weight:400;letter-spacing:0.5px;left:1498px;width:1200px;text-align:right;">244,553</div>
<div class="t" style="top:1487.7px;font-size:24px;line-height:29px;color:#444;font-weight:400;letter-spacing:0.5px;left:2721px;">30/11/2021</div>
<div class="t" style="top:1487.7px;font-size:24px;line-height:29px;color:#444;font-weight:400;letter-spacing:0.5px;left:1978px;width:1200px;text-align:right;">1,686</div>
<div class="a" style="left:232px;top:1590px;width:3044px;height:2px;background:#ebebeb"></div>
<svg class="a" style="left:246px;top:1542px" width="32" height="32" viewBox="0 0 32 32"><rect x="0" y="0" width="32" height="32" rx="5" fill="#4a7ec1"/><path d="M8 16.5 L13.5 22 L24.5 10.5" fill="none" stroke="#fff" stroke-width="3.6" stroke-linecap="round" stroke-linejoin="round"/></svg>
<div class="t" style="top:1547.7px;font-size:24px;line-height:29px;color:#4a7ec1;font-weight:400;letter-spacing:0.6px;left:363px;">Demo EPIC Geertjan</div>
<div class="a" style="left:765px;top:1548px;width:32px;height:24px;background:#cdd977"></div>
<div class="a" style="left:801px;top:1548px;width:32px;height:24px;background:#cdd977"></div>
<div class="a" style="left:837px;top:1548px;width:32px;height:24px;background:#cdd977"></div>
<div class="a" style="left:873px;top:1548px;width:32px;height:24px;background:#3b82c4"></div>
<div class="a" style="left:909px;top:1548px;width:32px;height:24px;background:#acd4ee"></div>
<div class="a" style="left:945px;top:1548px;width:32px;height:24px;background:#acd4ee"></div>
<div class="a" style="left:1101px;top:1544px;width:120px;height:39px;background:#d5d5d5;border-radius:5px"></div>
<div class="t" style="top:1549.7px;font-size:24px;line-height:29px;color:#fff;font-weight:400;letter-spacing:0.5px;left:-18px;width:1200px;text-align:right;">0.00</div>
<div class="t" style="top:1551.2px;font-size:22px;line-height:26px;color:#fff;font-weight:400;letter-spacing:0px;left:598.5px;width:1200px;text-align:center;">&#9733;</div>
<div class="t" style="top:1547.7px;font-size:24px;line-height:29px;color:#444;font-weight:400;letter-spacing:0.5px;left:1262px;">Portfolio B...</div>
<div class="t" style="top:1547.7px;font-size:24px;line-height:29px;color:#444;font-weight:400;letter-spacing:0.5px;left:1421.6px;"></div>
<div class="t" style="top:1547.7px;font-size:24px;line-height:29px;color:#444;font-weight:400;letter-spacing:0.5px;left:1620px;">Improvement ...</div>
<div class="t" style="top:1547.7px;font-size:24px;line-height:29px;color:#444;font-weight:400;letter-spacing:0.5px;left:958.5px;width:1200px;text-align:right;">12</div>
<div class="a" style="left:2208px;top:1547px;width:64px;height:32px;background:#e4e4e4;border:1.5px solid #f3a4a2;box-sizing:border-box"></div>
<div class="t" style="top:1550.8px;font-size:21px;line-height:25px;color:#e03333;font-weight:400;letter-spacing:0.4px;left:1640px;width:1200px;text-align:center;">OUT</div>
<div class="t" style="top:1547.7px;font-size:24px;line-height:29px;color:#444;font-weight:400;letter-spacing:0.5px;left:2322px;">High</div>
<div class="t" style="top:1547.7px;font-size:24px;line-height:29px;color:#444;font-weight:400;letter-spacing:0.5px;left:1498px;width:1200px;text-align:right;">63,000</div>
<div class="t" style="top:1547.7px;font-size:24px;line-height:29px;color:#444;font-weight:400;letter-spacing:0.5px;left:2721px;">3/1/2022</div>
<div class="t" style="top:1547.7px;font-size:24px;line-height:29px;color:#444;font-weight:400;letter-spacing:0.5px;left:1978px;width:1200px;text-align:right;">1,076</div>
<svg class="a" style="left:313px;top:1612px" width="20" height="11" viewBox="0 0 20 11"><path d="M0 0 L20 0 L10 11 Z" fill="#444"/></svg>
<div class="t" style="top:1604.0px;font-size:24px;line-height:29px;color:#444;font-weight:700;letter-spacing:0.45px;left:363px;">Product: Digital Desk</div>
<div class="a" style="left:232px;top:1646px;width:3044px;height:240px;background:#f1f8fd"></div>
<div class="a" style="left:232px;top:1645px;width:3044px;height:2px;background:#ebebeb"></div>
<div class="a" style="left:291px;top:1646px;width:2px;height:240px;background:#ebebeb"></div>
<div class="a" style="left:351px;top:1646px;width:2px;height:240px;background:#ebebeb"></div>
<div class="a" style="left:751px;top:1646px;width:2px;height:240px;background:#ebebeb"></div>
<div class="a" style="left:1088px;top:1646px;width:2px;height:240px;background:#ebebeb"></div>
<div class="a" style="left:1248px;top:1646px;width:2px;height:240px;background:#ebebeb"></div>
<div class="a" style="left:1408px;top:1646px;width:2px;height:240px;background:#ebebeb"></div>
<div class="a" style="left:1608px;top:1646px;width:2px;height:240px;background:#ebebeb"></div>
<div class="a" style="left:1808px;top:1646px;width:2px;height:240px;background:#ebebeb"></div>
<div class="a" style="left:2168px;top:1646px;width:2px;height:240px;background:#ebebeb"></div>
<div class="a" style="left:2308px;top:1646px;width:2px;height:240px;background:#ebebeb"></div>
<div class="a" style="left:2508px;top:1646px;width:2px;height:240px;background:#ebebeb"></div>
<div class="a" style="left:2708px;top:1646px;width:2px;height:240px;background:#ebebeb"></div>
<div class="a" style="left:2988px;top:1646px;width:2px;height:240px;background:#ebebeb"></div>
<div class="a" style="left:3188px;top:1646px;width:2px;height:240px;background:#ebebeb"></div>
<div class="a" style="left:231px;top:1646px;width:2px;height:240px;background:#ebebeb"></div>
<div class="a" style="left:232px;top:1705px;width:3044px;height:2px;background:#ebebeb"></div>
<svg class="a" style="left:246px;top:1657px" width="32" height="32" viewBox="0 0 32 32"><rect x="0" y="0" width="32" height="32" rx="5" fill="#4a7ec1"/><path d="M8 16.5 L13.5 22 L24.5 10.5" fill="none" stroke="#fff" stroke-width="3.6" stroke-linecap="round" stroke-linejoin="round"/></svg>
<div class="t" style="top:1662.7px;font-size:24px;line-height:29px;color:#4a7ec1;font-weight:400;letter-spacing:0.6px;left:363px;">API Library Refactoring</div>
<div class="a" style="left:765px;top:1663px;width:32px;height:24px;background:#cdd977"></div>
<div class="a" style="left:801px;top:1663px;width:32px;height:24px;background:#cdd977"></div>
<div class="a" style="left:837px;top:1663px;width:32px;height:24px;background:#cdd977"></div>
<div class="a" style="left:873px;top:1663px;width:32px;height:24px;background:#cdd977"></div>
<div class="a" style="left:909px;top:1663px;width:32px;height:24px;background:#cdd977"></div>
<svg class="a" style="left:945px;top:1663px" width="32" height="24" viewBox="0 0 32 24"><rect width="32" height="24" fill="#3b82c4"/><path d="M10 12.5 L14 16.5 L22 7.5" fill="none" stroke="#fff" stroke-width="2.6" stroke-linecap="round" stroke-linejoin="round"/></svg>
<div class="a" style="left:1101px;top:1659px;width:120px;height:39px;background:#ec6e6b;border-radius:5px"></div>
<div class="t" style="top:1664.7px;font-size:24px;line-height:29px;color:#fff;font-weight:400;letter-spacing:0.5px;left:-18px;width:1200px;text-align:right;">2.00</div>
<div class="t" style="top:1666.2px;font-size:22px;line-height:26px;color:#fff;font-weight:400;letter-spacing:0px;left:598.5px;width:1200px;text-align:center;">&#9733;</div>
<div class="t" style="top:1662.7px;font-size:24px;line-height:29px;color:#444;font-weight:400;letter-spacing:0.5px;left:1262px;">Done</div>
<div class="t" style="top:1662.7px;font-size:24px;line-height:29px;color:#444;font-weight:400;letter-spacing:0.5px;left:1421.6px;">Jamie Sason</div>
<div class="t" style="top:1662.7px;font-size:24px;line-height:29px;color:#444;font-weight:400;letter-spacing:0.5px;left:1620px;">Refactoring</div>
<div class="t" style="top:1662.7px;font-size:24px;line-height:29px;color:#444;font-weight:400;letter-spacing:0.5px;left:958.5px;width:1200px;text-align:right;"></div>
<div class="a" style="left:2208px;top:1662px;width:64px;height:32px;background:#e4e4e4;border:1.5px solid #f3a4a2;box-sizing:border-box"></div>
<div class="t" style="top:1665.8px;font-size:21px;line-height:25px;color:#e03333;font-weight:400;letter-spacing:0.4px;left:1640px;width:1200px;text-align:center;">OUT</div>
<div class="t" style="top:1662.7px;font-size:24px;line-height:29px;color:#444;font-weight:400;letter-spacing:0.5px;left:2322px;">High</div>
<div class="t" style="top:1662.7px;font-size:24px;line-height:29px;color:#444;font-weight:400;letter-spacing:0.5px;left:1498px;width:1200px;text-align:right;">61,600</div>
<div class="t" style="top:1662.7px;font-size:24px;line-height:29px;color:#444;font-weight:400;letter-spacing:0.5px;left:2721px;">21/07/2021</div>
<div class="t" style="top:1662.7px;font-size:24px;line-height:29px;color:#444;font-weight:400;letter-spacing:0.5px;left:1978px;width:1200px;text-align:right;">1,232</div>
<div class="a" style="left:232px;top:1765px;width:3044px;height:2px;background:#ebebeb"></div>
<svg class="a" style="left:246px;top:1717px" width="32" height="32" viewBox="0 0 32 32"><rect x="0" y="0" width="32" height="32" rx="5" fill="#4a7ec1"/><path d="M8 16.5 L13.5 22 L24.5 10.5" fill="none" stroke="#fff" stroke-width="3.6" stroke-linecap="round" stroke-linejoin="round"/></svg>
<div class="t" style="top:1722.7px;font-size:24px;line-height:29px;color:#4a7ec1;font-weight:400;letter-spacing:0.6px;left:363px;">New App for Debit Card (Jira)</div>
<div class="a" style="left:765px;top:1723px;width:32px;height:24px;background:#cdd977"></div>
<div class="a" style="left:801px;top:1723px;width:32px;height:24px;background:#cdd977"></div>
<div class="a" style="left:837px;top:1723px;width:32px;height:24px;background:#cdd977"></div>
<div class="a" style="left:873px;top:1723px;width:32px;height:24px;background:#cdd977"></div>
<div class="a" style="left:909px;top:1723px;width:32px;height:24px;background:#cdd977"></div>
<svg class="a" style="left:945px;top:1723px" width="32" height="24" viewBox="0 0 32 24"><rect width="32" height="24" fill="#3b82c4"/><path d="M10 12.5 L14 16.5 L22 7.5" fill="none" stroke="#fff" stroke-width="2.6" stroke-linecap="round" stroke-linejoin="round"/></svg>
<div class="a" style="left:1101px;top:1719px;width:120px;height:39px;background:#ec6e6b;border-radius:5px"></div>
<div class="t" style="top:1724.7px;font-size:24px;line-height:29px;color:#fff;font-weight:400;letter-spacing:0.5px;left:-18px;width:1200px;text-align:right;">3.31</div>
<div class="t" style="top:1726.2px;font-size:22px;line-height:26px;color:#fff;font-weight:400;letter-spacing:0px;left:598.5px;width:1200px;text-align:center;">&#9733;</div>
<div class="t" style="top:1722.7px;font-size:24px;line-height:29px;color:#444;font-weight:400;letter-spacing:0.5px;left:1262px;">Done</div>
<div class="t" style="top:1722.7px;font-size:24px;line-height:29px;color:#444;font-weight:400;letter-spacing:0.5px;left:1421.6px;"></div>
<div class="t" style="top:1722.7px;font-size:24px;line-height:29px;color:#444;font-weight:400;letter-spacing:0.5px;left:1620px;">Improvement ...</div>
<div class="t" style="top:1722.7px;font-size:24px;line-height:29px;color:#444;font-weight:400;letter-spacing:0.5px;left:958.5px;width:1200px;text-align:right;">3</div>
<div class="a" style="left:2208px;top:1722px;width:64px;height:32px;background:#e4e4e4;border:1.5px solid #f3a4a2;box-sizing:border-box"></div>
<div class="t" style="top:1725.8px;font-size:21px;line-height:25px;color:#e03333;font-weight:400;letter-spacing:0.4px;left:1640px;width:1200px;text-align:center;">OUT</div>
<div class="t" style="top:1722.7px;font-size:24px;line-height:29px;color:#444;font-weight:400;letter-spacing:0.5px;left:2322px;">High</div>
<div class="t" style="top:1722.7px;font-size:24px;line-height:29px;color:#444;font-weight:400;letter-spacing:0.5px;left:1498px;width:1200px;text-align:right;">295,700</div>
<div class="t" style="top:1722.7px;font-size:24px;line-height:29px;color:#444;font-weight:400;letter-spacing:0.5px;left:2721px;">4/6/2022</div>
<div class="t" style="top:1722.7px;font-size:24px;line-height:29px;color:#444;font-weight:400;letter-spacing:0.5px;left:1978px;width:1200px;text-align:right;">1,053</div>
<div class="a" style="left:232px;top:1825px;width:3044px;height:2px;background:#ebebeb"></div>
<svg class="a" style="left:246px;top:1777px" width="32" height="32" viewBox="0 0 32 32"><rect x="0" y="0" width="32" height="32" rx="5" fill="#4a7ec1"/><path d="M8 16.5 L13.5 22 L24.5 10.5" fill="none" stroke="#fff" stroke-width="3.6" stroke-linecap="round" stroke-linejoin="round"/></svg>
<div class="t" style="top:1782.7px;font-size:24px;line-height:29px;color:#4a7ec1;font-weight:400;letter-spacing:0.6px;left:363px;">Align UI/UX to WCAG</div>
<div class="a" style="left:765px;top:1783px;width:32px;height:24px;background:#cdd977"></div>
<div class="a" style="left:801px;top:1783px;width:32px;height:24px;background:#cdd977"></div>
<div class="a" style="left:837px;top:1783px;width:32px;height:24px;background:#cdd977"></div>
<div class="a" style="left:873px;top:1783px;width:32px;height:24px;background:#3b82c4"></div>
<svg class="a" style="left:909px;top:1783px" width="32" height="24" viewBox="0 0 32 24"><rect width="32" height="24" fill="#d9486a"/><circle cx="16" cy="12" r="7.5" fill="none" stroke="#fff" stroke-width="2"/><path d="M10.5 17.5 L21.5 6.5" stroke="#fff" stroke-width="2"/></svg>
<div class="a" style="left:945px;top:1783px;width:32px;height:24px;background:#acd4ee"></div>
<div class="a" style="left:1101px;top:1779px;width:120px;height:39px;background:#76a773;border-radius:5px"></div>
<div class="t" style="top:1784.7px;font-size:24px;line-height:29px;color:#fff;font-weight:400;letter-spacing:0.5px;left:-18px;width:1200px;text-align:right;">55.00</div>
<div class="t" style="top:1786.2px;font-size:22px;line-height:26px;color:#fff;font-weight:400;letter-spacing:0px;left:598.5px;width:1200px;text-align:center;">&#9733;</div>
<div class="t" style="top:1782.7px;font-size:24px;line-height:29px;color:#444;font-weight:400;letter-spacing:0.5px;left:1262px;">Portfolio B...</div>
<div class="t" style="top:1782.7px;font-size:24px;line-height:29px;color:#444;font-weight:400;letter-spacing:0.5px;left:1421.6px;"></div>
<div class="t" style="top:1782.7px;font-size:24px;line-height:29px;color:#444;font-weight:400;letter-spacing:0.5px;left:1620px;">Improvement ...</div>
<div class="t" style="top:1782.7px;font-size:24px;line-height:29px;color:#444;font-weight:400;letter-spacing:0.5px;left:958.5px;width:1200px;text-align:right;"></div>
<div class="a" style="left:2208px;top:1782px;width:64px;height:32px;background:#f6fdf0;border:1.5px solid #b7e390;box-sizing:border-box"></div>
<div class="t" style="top:1785.8px;font-size:21px;line-height:25px;color:#5cb82e;font-weight:400;letter-spacing:0.4px;left:1640px;width:1200px;text-align:center;">IN</div>
<div class="t" style="top:1782.7px;font-size:24px;line-height:29px;color:#444;font-weight:400;letter-spacing:0.5px;left:2322px;">Medium</div>
<div class="t" style="top:1782.7px;font-size:24px;line-height:29px;color:#444;font-weight:400;letter-spacing:0.5px;left:1498px;width:1200px;text-align:right;">132,000</div>
<div class="t" style="top:1782.7px;font-size:24px;line-height:29px;color:#444;font-weight:400;letter-spacing:0.5px;left:2721px;">1/10/2021</div>
<div class="t" style="top:1782.7px;font-size:24px;line-height:29px;color:#444;font-weight:400;letter-spacing:0.5px;left:1978px;width:1200px;text-align:right;"></div>
<div class="a" style="left:232px;top:1885px;width:3044px;height:2px;background:#ebebeb"></div>
<svg class="a" style="left:246px;top:1837px" width="32" height="32" viewBox="0 0 32 32"><rect x="0" y="0" width="32" height="32" rx="5" fill="#4a7ec1"/><path d="M8 16.5 L13.5 22 L24.5 10.5" fill="none" stroke="#fff" stroke-width="3.6" stroke-linecap="round" stroke-linejoin="round"/></svg>
<div class="t" style="top:1842.7px;font-size:24px;line-height:29px;color:#4a7ec1;font-weight:400;letter-spacing:0.6px;left:363px;">DEVOPS Integration</div>
<div class="a" style="left:765px;top:1843px;width:32px;height:24px;background:#cdd977"></div>
<div class="a" style="left:801px;top:1843px;width:32px;height:24px;background:#cdd977"></div>
<div class="a" style="left:837px;top:1843px;width:32px;height:24px;background:#cdd977"></div>
<div class="a" style="left:873px;top:1843px;width:32px;height:24px;background:#3b82c4"></div>
<div class="a" style="left:909px;top:1843px;width:32px;height:24px;background:#acd4ee"></div>
<div class="a" style="left:945px;top:1843px;width:32px;height:24px;background:#acd4ee"></div>
<div class="a" style="left:1101px;top:1839px;width:120px;height:39px;background:#ec6e6b;border-radius:5px"></div>
<div class="t" style="top:1844.7px;font-size:24px;line-height:29px;color:#fff;font-weight:400;letter-spacing:0.5px;left:-18px;width:1200px;text-align:right;">5.13</div>
<div class="t" style="top:1846.2px;font-size:22px;line-height:26px;color:#fff;font-weight:400;letter-spacing:0px;left:598.5px;width:1200px;text-align:center;">&#9733;</div>
<div class="t" style="top:1842.7px;font-size:24px;line-height:29px;color:#444;font-weight:400;letter-spacing:0.5px;left:1262px;">Portfolio B...</div>
<div class="t" style="top:1842.7px;font-size:24px;line-height:29px;color:#444;font-weight:400;letter-spacing:0.5px;left:1421.6px;">John Jacobs</div>
<div class="t" style="top:1842.7px;font-size:24px;line-height:29px;color:#444;font-weight:400;letter-spacing:0.5px;left:1620px;">New Develop...</div>
<div class="t" style="top:1842.7px;font-size:24px;line-height:29px;color:#444;font-weight:400;letter-spacing:0.5px;left:958.5px;width:1200px;text-align:right;">14</div>
<div class="a" style="left:2208px;top:1842px;width:64px;height:32px;background:#f6fdf0;border:1.5px solid #b7e390;box-sizing:border-box"></div>
<div class="t" style="top:1845.8px;font-size:21px;line-height:25px;color:#5cb82e;font-weight:400;letter-spacing:0.4px;left:1640px;width:1200px;text-align:center;">IN</div>
<div class="t" style="top:1842.7px;font-size:24px;line-height:29px;color:#444;font-weight:400;letter-spacing:0.5px;left:2322px;">High</div>
<div class="t" style="top:1842.7px;font-size:24px;line-height:29px;color:#444;font-weight:400;letter-spacing:0.5px;left:1498px;width:1200px;text-align:right;">280,000</div>
<div class="t" style="top:1842.7px;font-size:24px;line-height:29px;color:#444;font-weight:400;letter-spacing:0.5px;left:2721px;">20/04/2021</div>
<div class="t" style="top:1842.7px;font-size:24px;line-height:29px;color:#444;font-weight:400;letter-spacing:0.5px;left:1978px;width:1200px;text-align:right;">1,210</div>
<svg class="a" style="left:313px;top:1908px" width="20" height="11" viewBox="0 0 20 11"><path d="M0 0 L20 0 L10 11 Z" fill="#444"/></svg>
<div class="t" style="top:1899.0px;font-size:24px;line-height:29px;color:#444;font-weight:700;letter-spacing:0.45px;left:363px;">Product: Portfolio Manager</div>
</div>
</body></html>
